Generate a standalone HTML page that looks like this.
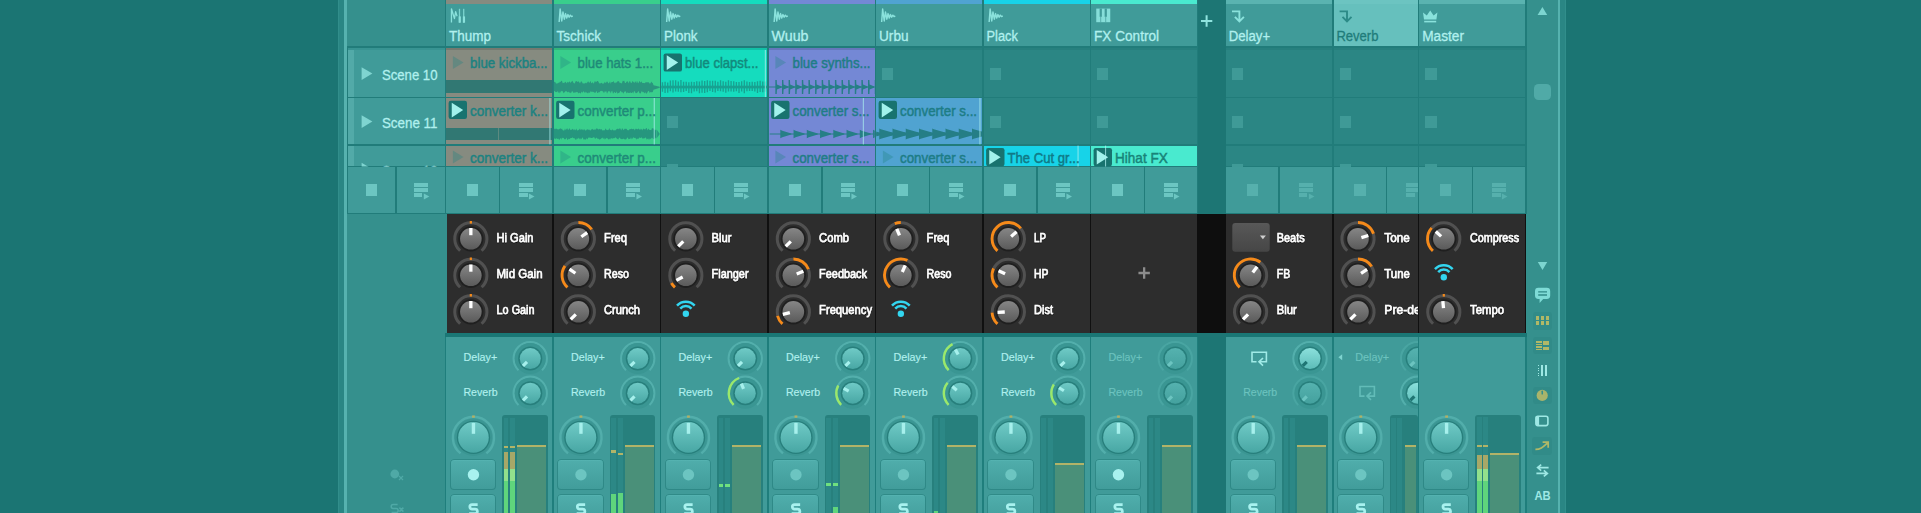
<!DOCTYPE html>
<html lang="en"><head><meta charset="utf-8"><title>Mixer</title>
<style>
html,body{margin:0;padding:0;background:#1b7573;}
body{width:1921px;height:513px;overflow:hidden;position:relative;}
#r{position:absolute;left:0;top:0;width:1921px;height:513px;overflow:hidden;}
#r>div{position:absolute;}
svg{position:absolute;left:0;top:0;}
svg text{font-family:"Liberation Sans",sans-serif;white-space:pre;}
</style></head><body>
<div id="r">
<div style="left:338.40px;top:0.00px;width:6.00px;height:513.00px;background:#2a8684;"></div>
<div style="left:338.40px;top:0.00px;width:1.10px;height:513.00px;background:#318e8b;"></div>
<div style="left:344.30px;top:0.00px;width:2.40px;height:513.00px;background:#56b2af;"></div>
<div style="left:346.70px;top:0.00px;width:1211.00px;height:513.00px;background:#35908d;"></div>
<div style="left:1557.70px;top:0.00px;width:2.60px;height:513.00px;background:#56b2af;"></div>
<div style="left:1560.30px;top:0.00px;width:5.60px;height:513.00px;background:#2a8684;"></div>
<div style="left:1564.90px;top:0.00px;width:1.10px;height:513.00px;background:#318e8b;"></div>
<div style="left:1197.30px;top:0.00px;width:28.70px;height:513.00px;background:#1d7674;"></div>
<div style="left:444.75px;top:0.00px;width:753.25px;height:213.70px;background:#217c7a;"></div>
<div style="left:1225.50px;top:0.00px;width:301.40px;height:213.70px;background:#217c7a;"></div>
<div style="left:347.20px;top:46.00px;width:99.00px;height:167.70px;background:#217c7a;"></div>
<div style="left:446.25px;top:0.00px;width:106.00px;height:3.50px;background:#868b80;"></div>
<div style="left:446.25px;top:3.50px;width:106.00px;height:42.50px;background:#409b99;"></div>
<div style="left:553.75px;top:0.00px;width:106.00px;height:3.50px;background:#39ce8c;"></div>
<div style="left:553.75px;top:3.50px;width:106.00px;height:42.50px;background:#409b99;"></div>
<div style="left:661.25px;top:0.00px;width:106.00px;height:3.50px;background:#15dcbe;"></div>
<div style="left:661.25px;top:3.50px;width:106.00px;height:42.50px;background:#409b99;"></div>
<div style="left:768.75px;top:0.00px;width:106.00px;height:3.50px;background:#7488d5;"></div>
<div style="left:768.75px;top:3.50px;width:106.00px;height:42.50px;background:#409b99;"></div>
<div style="left:876.25px;top:0.00px;width:106.00px;height:3.50px;background:#50a3d1;"></div>
<div style="left:876.25px;top:3.50px;width:106.00px;height:42.50px;background:#409b99;"></div>
<div style="left:983.75px;top:0.00px;width:106.00px;height:3.50px;background:#17d3e8;"></div>
<div style="left:983.75px;top:3.50px;width:106.00px;height:42.50px;background:#409b99;"></div>
<div style="left:1091.25px;top:0.00px;width:106.00px;height:3.50px;background:#49eacf;"></div>
<div style="left:1091.25px;top:3.50px;width:106.00px;height:42.50px;background:#409b99;"></div>
<div style="left:1226.00px;top:0.00px;width:106.25px;height:3.50px;background:#5ab3b0;"></div>
<div style="left:1226.00px;top:3.50px;width:106.25px;height:42.50px;background:#409b99;"></div>
<div style="left:1333.60px;top:0.00px;width:84.40px;height:3.50px;background:#6cc4c1;"></div>
<div style="left:1333.60px;top:3.50px;width:84.40px;height:42.50px;background:#66c0bd;"></div>
<div style="left:1419.40px;top:0.00px;width:105.80px;height:3.50px;background:#5ab3b0;"></div>
<div style="left:1419.40px;top:3.50px;width:105.80px;height:42.50px;background:#409b99;"></div>
<div style="left:347.70px;top:48.00px;width:97.60px;height:2.00px;background:#389492;"></div>
<div style="left:347.70px;top:50.00px;width:97.40px;height:47.10px;background:#409b99;"></div>
<div style="left:347.70px;top:50.00px;width:6.20px;height:47.10px;background:#52aaa8;"></div>
<div style="left:347.70px;top:98.00px;width:97.40px;height:46.40px;background:#409b99;"></div>
<div style="left:347.70px;top:98.00px;width:6.20px;height:46.40px;background:#52aaa8;"></div>
<div style="left:347.70px;top:145.60px;width:97.40px;height:20.90px;background:#409b99;"></div>
<div style="left:347.70px;top:145.60px;width:6.20px;height:20.90px;background:#52aaa8;"></div>
<div style="left:446.25px;top:47.90px;width:106.00px;height:2.10px;background:#757a70;"></div>
<div style="left:446.25px;top:50.00px;width:106.00px;height:47.10px;background:#868b80;"></div>
<div style="left:446.25px;top:98.00px;width:106.00px;height:46.40px;background:#868b80;"></div>
<div style="left:446.25px;top:145.60px;width:106.00px;height:20.90px;background:#868b80;"></div>
<div style="left:553.75px;top:47.90px;width:106.00px;height:2.10px;background:#32b57b;"></div>
<div style="left:553.75px;top:50.00px;width:106.00px;height:47.10px;background:#39ce8c;"></div>
<div style="left:553.75px;top:98.00px;width:106.00px;height:46.40px;background:#39ce8c;"></div>
<div style="left:553.75px;top:145.60px;width:106.00px;height:20.90px;background:#39ce8c;"></div>
<div style="left:661.25px;top:47.90px;width:106.00px;height:2.10px;background:#12c1a7;"></div>
<div style="left:661.25px;top:50.00px;width:106.00px;height:47.10px;background:#15dcbe;"></div>
<div style="left:661.25px;top:98.00px;width:106.00px;height:46.40px;background:#2b8684;"></div>
<div style="left:667.15px;top:116.40px;width:11.30px;height:11.30px;background:#3f9a97;"></div>
<div style="left:661.25px;top:145.60px;width:106.00px;height:20.90px;background:#2b8684;"></div>
<div style="left:667.15px;top:164.00px;width:11.30px;height:3.00px;background:#3f9a97;"></div>
<div style="left:768.75px;top:47.90px;width:106.00px;height:2.10px;background:#6677bb;"></div>
<div style="left:768.75px;top:50.00px;width:106.00px;height:47.10px;background:#7488d5;"></div>
<div style="left:768.75px;top:98.00px;width:106.00px;height:46.40px;background:#7488d5;"></div>
<div style="left:768.75px;top:145.60px;width:106.00px;height:20.90px;background:#7488d5;"></div>
<div style="left:876.25px;top:47.90px;width:106.00px;height:2.10px;background:#27807e;"></div>
<div style="left:876.25px;top:50.00px;width:106.00px;height:47.10px;background:#2b8684;"></div>
<div style="left:882.15px;top:68.40px;width:11.30px;height:11.30px;background:#3f9a97;"></div>
<div style="left:876.25px;top:98.00px;width:106.00px;height:46.40px;background:#50a3d1;"></div>
<div style="left:876.25px;top:145.60px;width:106.00px;height:20.90px;background:#50a3d1;"></div>
<div style="left:983.75px;top:47.90px;width:106.00px;height:2.10px;background:#27807e;"></div>
<div style="left:983.75px;top:50.00px;width:106.00px;height:47.10px;background:#2b8684;"></div>
<div style="left:989.65px;top:68.40px;width:11.30px;height:11.30px;background:#3f9a97;"></div>
<div style="left:983.75px;top:98.00px;width:106.00px;height:46.40px;background:#2b8684;"></div>
<div style="left:989.65px;top:116.40px;width:11.30px;height:11.30px;background:#3f9a97;"></div>
<div style="left:983.75px;top:145.60px;width:106.00px;height:20.90px;background:#17d3e8;"></div>
<div style="left:1091.25px;top:47.90px;width:106.00px;height:2.10px;background:#27807e;"></div>
<div style="left:1091.25px;top:50.00px;width:106.00px;height:47.10px;background:#2b8684;"></div>
<div style="left:1097.15px;top:68.40px;width:11.30px;height:11.30px;background:#3f9a97;"></div>
<div style="left:1091.25px;top:98.00px;width:106.00px;height:46.40px;background:#2b8684;"></div>
<div style="left:1097.15px;top:116.40px;width:11.30px;height:11.30px;background:#3f9a97;"></div>
<div style="left:1091.25px;top:145.60px;width:106.00px;height:20.90px;background:#49eacf;"></div>
<div style="left:1226.00px;top:47.90px;width:106.25px;height:2.10px;background:#27807e;"></div>
<div style="left:1226.00px;top:50.00px;width:106.25px;height:47.10px;background:#2b8684;"></div>
<div style="left:1231.90px;top:68.40px;width:11.30px;height:11.30px;background:#3f9a97;"></div>
<div style="left:1226.00px;top:98.00px;width:106.25px;height:46.40px;background:#2b8684;"></div>
<div style="left:1231.90px;top:116.40px;width:11.30px;height:11.30px;background:#3f9a97;"></div>
<div style="left:1226.00px;top:145.60px;width:106.25px;height:20.90px;background:#2b8684;"></div>
<div style="left:1231.90px;top:164.00px;width:11.30px;height:3.00px;background:#3f9a97;"></div>
<div style="left:1333.60px;top:47.90px;width:84.40px;height:2.10px;background:#27807e;"></div>
<div style="left:1333.60px;top:50.00px;width:84.40px;height:47.10px;background:#2b8684;"></div>
<div style="left:1339.50px;top:68.40px;width:11.30px;height:11.30px;background:#3f9a97;"></div>
<div style="left:1333.60px;top:98.00px;width:84.40px;height:46.40px;background:#2b8684;"></div>
<div style="left:1339.50px;top:116.40px;width:11.30px;height:11.30px;background:#3f9a97;"></div>
<div style="left:1333.60px;top:145.60px;width:84.40px;height:20.90px;background:#2b8684;"></div>
<div style="left:1339.50px;top:164.00px;width:11.30px;height:3.00px;background:#3f9a97;"></div>
<div style="left:1419.40px;top:47.90px;width:105.80px;height:2.10px;background:#27807e;"></div>
<div style="left:1419.40px;top:50.00px;width:105.80px;height:47.10px;background:#2b8684;"></div>
<div style="left:1425.30px;top:68.40px;width:11.30px;height:11.30px;background:#3f9a97;"></div>
<div style="left:1419.40px;top:98.00px;width:105.80px;height:46.40px;background:#2b8684;"></div>
<div style="left:1425.30px;top:116.40px;width:11.30px;height:11.30px;background:#3f9a97;"></div>
<div style="left:1419.40px;top:145.60px;width:105.80px;height:20.90px;background:#2b8684;"></div>
<div style="left:1425.30px;top:164.00px;width:11.30px;height:3.00px;background:#3f9a97;"></div>
<div style="left:446.25px;top:80.00px;width:106.00px;height:13.20px;background:#317873;"></div>
<div style="left:446.25px;top:127.75px;width:106.00px;height:12.30px;background:#317873;"></div>
<div style="left:498.30px;top:127.75px;width:1.00px;height:12.30px;background:#5c8a80;"></div>
<div style="left:347.20px;top:166.00px;width:99.00px;height:47.70px;background:#217c7a;"></div>
<div style="left:347.75px;top:167.00px;width:47.30px;height:45.50px;background:#409b99;"></div>
<div style="left:396.90px;top:167.00px;width:48.20px;height:45.50px;background:#409b99;"></div>
<div style="left:365.90px;top:184.40px;width:11.30px;height:11.30px;background:#6cc6c2;"></div>
<div style="left:413.80px;top:183.10px;width:14.00px;height:3.50px;background:#6cc6c2;"></div>
<div style="left:413.80px;top:187.80px;width:14.00px;height:3.90px;background:#6cc6c2;"></div>
<div style="left:413.80px;top:193.10px;width:8.60px;height:3.90px;background:#6cc6c2;"></div>
<div style="left:446.25px;top:167.00px;width:52.25px;height:45.50px;background:#409b99;"></div>
<div style="left:500.00px;top:167.00px;width:52.25px;height:45.50px;background:#409b99;"></div>
<div style="left:466.88px;top:184.40px;width:11.30px;height:11.30px;background:#6cc6c2;"></div>
<div style="left:518.92px;top:183.10px;width:14.00px;height:3.50px;background:#6cc6c2;"></div>
<div style="left:518.92px;top:187.80px;width:14.00px;height:3.90px;background:#6cc6c2;"></div>
<div style="left:518.92px;top:193.10px;width:8.60px;height:3.90px;background:#6cc6c2;"></div>
<div style="left:553.75px;top:167.00px;width:52.25px;height:45.50px;background:#409b99;"></div>
<div style="left:607.50px;top:167.00px;width:52.25px;height:45.50px;background:#409b99;"></div>
<div style="left:574.38px;top:184.40px;width:11.30px;height:11.30px;background:#6cc6c2;"></div>
<div style="left:626.42px;top:183.10px;width:14.00px;height:3.50px;background:#6cc6c2;"></div>
<div style="left:626.42px;top:187.80px;width:14.00px;height:3.90px;background:#6cc6c2;"></div>
<div style="left:626.42px;top:193.10px;width:8.60px;height:3.90px;background:#6cc6c2;"></div>
<div style="left:661.25px;top:167.00px;width:52.25px;height:45.50px;background:#409b99;"></div>
<div style="left:715.00px;top:167.00px;width:52.25px;height:45.50px;background:#409b99;"></div>
<div style="left:681.88px;top:184.40px;width:11.30px;height:11.30px;background:#6cc6c2;"></div>
<div style="left:733.92px;top:183.10px;width:14.00px;height:3.50px;background:#6cc6c2;"></div>
<div style="left:733.92px;top:187.80px;width:14.00px;height:3.90px;background:#6cc6c2;"></div>
<div style="left:733.92px;top:193.10px;width:8.60px;height:3.90px;background:#6cc6c2;"></div>
<div style="left:768.75px;top:167.00px;width:52.25px;height:45.50px;background:#409b99;"></div>
<div style="left:822.50px;top:167.00px;width:52.25px;height:45.50px;background:#409b99;"></div>
<div style="left:789.38px;top:184.40px;width:11.30px;height:11.30px;background:#6cc6c2;"></div>
<div style="left:841.42px;top:183.10px;width:14.00px;height:3.50px;background:#6cc6c2;"></div>
<div style="left:841.42px;top:187.80px;width:14.00px;height:3.90px;background:#6cc6c2;"></div>
<div style="left:841.42px;top:193.10px;width:8.60px;height:3.90px;background:#6cc6c2;"></div>
<div style="left:876.25px;top:167.00px;width:52.25px;height:45.50px;background:#409b99;"></div>
<div style="left:930.00px;top:167.00px;width:52.25px;height:45.50px;background:#409b99;"></div>
<div style="left:896.88px;top:184.40px;width:11.30px;height:11.30px;background:#6cc6c2;"></div>
<div style="left:948.92px;top:183.10px;width:14.00px;height:3.50px;background:#6cc6c2;"></div>
<div style="left:948.92px;top:187.80px;width:14.00px;height:3.90px;background:#6cc6c2;"></div>
<div style="left:948.92px;top:193.10px;width:8.60px;height:3.90px;background:#6cc6c2;"></div>
<div style="left:983.75px;top:167.00px;width:52.25px;height:45.50px;background:#409b99;"></div>
<div style="left:1037.50px;top:167.00px;width:52.25px;height:45.50px;background:#409b99;"></div>
<div style="left:1004.38px;top:184.40px;width:11.30px;height:11.30px;background:#6cc6c2;"></div>
<div style="left:1056.42px;top:183.10px;width:14.00px;height:3.50px;background:#6cc6c2;"></div>
<div style="left:1056.42px;top:187.80px;width:14.00px;height:3.90px;background:#6cc6c2;"></div>
<div style="left:1056.42px;top:193.10px;width:8.60px;height:3.90px;background:#6cc6c2;"></div>
<div style="left:1091.25px;top:167.00px;width:52.25px;height:45.50px;background:#409b99;"></div>
<div style="left:1145.00px;top:167.00px;width:52.25px;height:45.50px;background:#409b99;"></div>
<div style="left:1111.88px;top:184.40px;width:11.30px;height:11.30px;background:#6cc6c2;"></div>
<div style="left:1163.92px;top:183.10px;width:14.00px;height:3.50px;background:#6cc6c2;"></div>
<div style="left:1163.92px;top:187.80px;width:14.00px;height:3.90px;background:#6cc6c2;"></div>
<div style="left:1163.92px;top:193.10px;width:8.60px;height:3.90px;background:#6cc6c2;"></div>
<div style="left:1226.00px;top:167.00px;width:52.38px;height:45.50px;background:#409b99;"></div>
<div style="left:1279.88px;top:167.00px;width:52.38px;height:45.50px;background:#409b99;"></div>
<div style="left:1246.69px;top:184.40px;width:11.30px;height:11.30px;background:#56b0ad;"></div>
<div style="left:1298.86px;top:183.10px;width:14.00px;height:3.50px;background:#56b0ad;"></div>
<div style="left:1298.86px;top:187.80px;width:14.00px;height:3.90px;background:#56b0ad;"></div>
<div style="left:1298.86px;top:193.10px;width:8.60px;height:3.90px;background:#56b0ad;"></div>
<div style="left:1333.60px;top:167.00px;width:52.38px;height:45.50px;background:#409b99;"></div>
<div style="left:1387.47px;top:167.00px;width:30.53px;height:45.50px;background:#409b99;"></div>
<div style="left:1354.29px;top:184.40px;width:11.30px;height:11.30px;background:#56b0ad;"></div>
<div style="left:1406.46px;top:183.10px;width:11.54px;height:3.50px;background:#56b0ad;"></div>
<div style="left:1406.46px;top:187.80px;width:11.54px;height:3.90px;background:#56b0ad;"></div>
<div style="left:1406.46px;top:193.10px;width:8.60px;height:3.90px;background:#56b0ad;"></div>
<div style="left:1419.40px;top:167.00px;width:52.15px;height:45.50px;background:#409b99;"></div>
<div style="left:1473.05px;top:167.00px;width:52.15px;height:45.50px;background:#409b99;"></div>
<div style="left:1439.98px;top:184.40px;width:11.30px;height:11.30px;background:#56b0ad;"></div>
<div style="left:1491.92px;top:183.10px;width:14.00px;height:3.50px;background:#56b0ad;"></div>
<div style="left:1491.92px;top:187.80px;width:14.00px;height:3.90px;background:#56b0ad;"></div>
<div style="left:1491.92px;top:193.10px;width:8.60px;height:3.90px;background:#56b0ad;"></div>
<div style="left:446.90px;top:213.70px;width:1078.70px;height:119.00px;background:#101010;"></div>
<div style="left:446.85px;top:213.70px;width:105.30px;height:119.00px;background:#2d2d2d;"></div>
<div style="left:553.75px;top:213.70px;width:105.90px;height:119.00px;background:#2d2d2d;"></div>
<div style="left:661.25px;top:213.70px;width:105.90px;height:119.00px;background:#2d2d2d;"></div>
<div style="left:768.75px;top:213.70px;width:105.90px;height:119.00px;background:#2d2d2d;"></div>
<div style="left:876.25px;top:213.70px;width:105.90px;height:119.00px;background:#2d2d2d;"></div>
<div style="left:983.75px;top:213.70px;width:105.90px;height:119.00px;background:#2d2d2d;"></div>
<div style="left:1091.25px;top:213.70px;width:105.90px;height:119.00px;background:#2d2d2d;"></div>
<div style="left:1226.00px;top:213.70px;width:106.25px;height:119.00px;background:#2d2d2d;"></div>
<div style="left:1333.60px;top:213.70px;width:84.40px;height:119.00px;background:#2d2d2d;"></div>
<div style="left:1419.40px;top:213.70px;width:105.80px;height:119.00px;background:#2d2d2d;"></div>
<div style="left:1197.30px;top:213.70px;width:28.70px;height:119.00px;background:#0e0e0e;"></div>
<div style="left:444.75px;top:332.70px;width:753.25px;height:181.00px;background:#1f7e7c;"></div>
<div style="left:1225.50px;top:332.70px;width:301.40px;height:181.00px;background:#1f7e7c;"></div>
<div style="left:444.75px;top:332.60px;width:753.25px;height:4.00px;background:#1a7775;"></div>
<div style="left:1225.50px;top:332.60px;width:301.40px;height:4.00px;background:#1a7775;"></div>
<div style="left:446.25px;top:336.60px;width:106.00px;height:180.00px;background:#409b99;"></div>
<div style="left:449.95px;top:459.40px;width:46.4px;height:30.400000000000002px;border-radius:4px;background:linear-gradient(#50aeac,#419c9a);box-shadow:inset 0 0 0 1px rgba(44,134,132,.9),inset 0 2px 0 0 rgba(95,190,186,.35);"></div>
<div style="left:449.95px;top:494.20px;width:46.4px;height:30.400000000000002px;border-radius:4px;background:linear-gradient(#50aeac,#419c9a);box-shadow:inset 0 0 0 1px rgba(44,134,132,.9),inset 0 2px 0 0 rgba(95,190,186,.35);"></div>
<div style="left:502.25px;top:415.00px;width:45.50px;height:110.00px;background:#27807d;border-radius:3px;"></div>
<div style="left:503.85px;top:417.50px;width:4.50px;height:110.00px;background:#2c8886;"></div>
<div style="left:510.05px;top:417.50px;width:5.00px;height:110.00px;background:#2c8886;"></div>
<div style="left:517.25px;top:445.00px;width:28.80px;height:2.00px;background:#b2b368;"></div>
<div style="left:517.25px;top:447.00px;width:28.80px;height:80.00px;background:#4a9079;"></div>
<div style="left:503.85px;top:445.80px;width:4.50px;height:2.50px;background:#b2b468;"></div>
<div style="left:503.85px;top:452.00px;width:4.50px;height:16.90px;background:#a7a868;"></div>
<div style="left:503.85px;top:468.90px;width:4.50px;height:11.90px;background:#92e08c;"></div>
<div style="left:503.85px;top:480.80px;width:4.50px;height:39.20px;background:#5fd57c;"></div>
<div style="left:510.05px;top:445.80px;width:5.00px;height:2.50px;background:#b2b468;"></div>
<div style="left:510.05px;top:452.00px;width:5.00px;height:16.90px;background:#a7a868;"></div>
<div style="left:510.05px;top:468.90px;width:5.00px;height:11.90px;background:#92e08c;"></div>
<div style="left:510.05px;top:480.80px;width:5.00px;height:39.20px;background:#5fd57c;"></div>
<div style="left:553.75px;top:336.60px;width:106.00px;height:180.00px;background:#409b99;"></div>
<div style="left:557.45px;top:459.40px;width:46.4px;height:30.400000000000002px;border-radius:4px;background:linear-gradient(#50aeac,#419c9a);box-shadow:inset 0 0 0 1px rgba(44,134,132,.9),inset 0 2px 0 0 rgba(95,190,186,.35);"></div>
<div style="left:557.45px;top:494.20px;width:46.4px;height:30.400000000000002px;border-radius:4px;background:linear-gradient(#50aeac,#419c9a);box-shadow:inset 0 0 0 1px rgba(44,134,132,.9),inset 0 2px 0 0 rgba(95,190,186,.35);"></div>
<div style="left:609.75px;top:415.00px;width:45.50px;height:110.00px;background:#27807d;border-radius:3px;"></div>
<div style="left:611.35px;top:417.50px;width:4.50px;height:110.00px;background:#2c8886;"></div>
<div style="left:617.55px;top:417.50px;width:5.00px;height:110.00px;background:#2c8886;"></div>
<div style="left:624.75px;top:445.00px;width:28.80px;height:2.00px;background:#b2b368;"></div>
<div style="left:624.75px;top:447.00px;width:28.80px;height:80.00px;background:#4a9079;"></div>
<div style="left:611.35px;top:450.30px;width:4.50px;height:2.50px;background:#b2b468;"></div>
<div style="left:611.35px;top:493.80px;width:4.50px;height:26.20px;background:#5fd57c;"></div>
<div style="left:617.55px;top:452.90px;width:5.00px;height:2.50px;background:#b2b468;"></div>
<div style="left:617.55px;top:492.60px;width:5.00px;height:27.40px;background:#5fd57c;"></div>
<div style="left:661.25px;top:336.60px;width:106.00px;height:180.00px;background:#409b99;"></div>
<div style="left:664.95px;top:459.40px;width:46.4px;height:30.400000000000002px;border-radius:4px;background:linear-gradient(#50aeac,#419c9a);box-shadow:inset 0 0 0 1px rgba(44,134,132,.9),inset 0 2px 0 0 rgba(95,190,186,.35);"></div>
<div style="left:664.95px;top:494.20px;width:46.4px;height:30.400000000000002px;border-radius:4px;background:linear-gradient(#50aeac,#419c9a);box-shadow:inset 0 0 0 1px rgba(44,134,132,.9),inset 0 2px 0 0 rgba(95,190,186,.35);"></div>
<div style="left:717.25px;top:415.00px;width:45.50px;height:110.00px;background:#27807d;border-radius:3px;"></div>
<div style="left:718.85px;top:417.50px;width:4.50px;height:110.00px;background:#2c8886;"></div>
<div style="left:725.05px;top:417.50px;width:5.00px;height:110.00px;background:#2c8886;"></div>
<div style="left:732.25px;top:445.00px;width:28.80px;height:2.00px;background:#b2b368;"></div>
<div style="left:732.25px;top:447.00px;width:28.80px;height:80.00px;background:#4a9079;"></div>
<div style="left:718.85px;top:484.00px;width:4.50px;height:2.50px;background:#6fe07f;"></div>
<div style="left:725.05px;top:484.00px;width:5.00px;height:2.50px;background:#6fe07f;"></div>
<div style="left:768.75px;top:336.60px;width:106.00px;height:180.00px;background:#409b99;"></div>
<div style="left:772.45px;top:459.40px;width:46.4px;height:30.400000000000002px;border-radius:4px;background:linear-gradient(#50aeac,#419c9a);box-shadow:inset 0 0 0 1px rgba(44,134,132,.9),inset 0 2px 0 0 rgba(95,190,186,.35);"></div>
<div style="left:772.45px;top:494.20px;width:46.4px;height:30.400000000000002px;border-radius:4px;background:linear-gradient(#50aeac,#419c9a);box-shadow:inset 0 0 0 1px rgba(44,134,132,.9),inset 0 2px 0 0 rgba(95,190,186,.35);"></div>
<div style="left:824.75px;top:415.00px;width:45.50px;height:110.00px;background:#27807d;border-radius:3px;"></div>
<div style="left:826.35px;top:417.50px;width:4.50px;height:110.00px;background:#2c8886;"></div>
<div style="left:832.55px;top:417.50px;width:5.00px;height:110.00px;background:#2c8886;"></div>
<div style="left:839.75px;top:445.00px;width:28.80px;height:2.00px;background:#b2b368;"></div>
<div style="left:839.75px;top:447.00px;width:28.80px;height:80.00px;background:#4a9079;"></div>
<div style="left:826.35px;top:483.40px;width:4.50px;height:2.50px;background:#6fe07f;"></div>
<div style="left:832.55px;top:483.40px;width:5.00px;height:2.50px;background:#6fe07f;"></div>
<div style="left:832.55px;top:506.50px;width:5.00px;height:13.50px;background:#5fd57c;"></div>
<div style="left:876.25px;top:336.60px;width:106.00px;height:180.00px;background:#409b99;"></div>
<div style="left:879.95px;top:459.40px;width:46.4px;height:30.400000000000002px;border-radius:4px;background:linear-gradient(#50aeac,#419c9a);box-shadow:inset 0 0 0 1px rgba(44,134,132,.9),inset 0 2px 0 0 rgba(95,190,186,.35);"></div>
<div style="left:879.95px;top:494.20px;width:46.4px;height:30.400000000000002px;border-radius:4px;background:linear-gradient(#50aeac,#419c9a);box-shadow:inset 0 0 0 1px rgba(44,134,132,.9),inset 0 2px 0 0 rgba(95,190,186,.35);"></div>
<div style="left:932.25px;top:415.00px;width:45.50px;height:110.00px;background:#27807d;border-radius:3px;"></div>
<div style="left:933.85px;top:417.50px;width:4.50px;height:110.00px;background:#2c8886;"></div>
<div style="left:940.05px;top:417.50px;width:5.00px;height:110.00px;background:#2c8886;"></div>
<div style="left:947.25px;top:445.00px;width:28.80px;height:2.00px;background:#b2b368;"></div>
<div style="left:947.25px;top:447.00px;width:28.80px;height:80.00px;background:#4a9079;"></div>
<div style="left:933.85px;top:511.00px;width:4.50px;height:9.00px;background:#5fd57c;"></div>
<div style="left:983.75px;top:336.60px;width:106.00px;height:180.00px;background:#409b99;"></div>
<div style="left:987.45px;top:459.40px;width:46.4px;height:30.400000000000002px;border-radius:4px;background:linear-gradient(#50aeac,#419c9a);box-shadow:inset 0 0 0 1px rgba(44,134,132,.9),inset 0 2px 0 0 rgba(95,190,186,.35);"></div>
<div style="left:987.45px;top:494.20px;width:46.4px;height:30.400000000000002px;border-radius:4px;background:linear-gradient(#50aeac,#419c9a);box-shadow:inset 0 0 0 1px rgba(44,134,132,.9),inset 0 2px 0 0 rgba(95,190,186,.35);"></div>
<div style="left:1039.75px;top:415.00px;width:45.50px;height:110.00px;background:#27807d;border-radius:3px;"></div>
<div style="left:1041.35px;top:417.50px;width:4.50px;height:110.00px;background:#2c8886;"></div>
<div style="left:1047.55px;top:417.50px;width:5.00px;height:110.00px;background:#2c8886;"></div>
<div style="left:1054.75px;top:463.00px;width:28.80px;height:2.00px;background:#b2b368;"></div>
<div style="left:1054.75px;top:465.00px;width:28.80px;height:80.00px;background:#4a9079;"></div>
<div style="left:1091.25px;top:336.60px;width:106.00px;height:180.00px;background:#409b99;"></div>
<div style="left:1094.95px;top:459.40px;width:46.4px;height:30.400000000000002px;border-radius:4px;background:linear-gradient(#50aeac,#419c9a);box-shadow:inset 0 0 0 1px rgba(44,134,132,.9),inset 0 2px 0 0 rgba(95,190,186,.35);"></div>
<div style="left:1094.95px;top:494.20px;width:46.4px;height:30.400000000000002px;border-radius:4px;background:linear-gradient(#50aeac,#419c9a);box-shadow:inset 0 0 0 1px rgba(44,134,132,.9),inset 0 2px 0 0 rgba(95,190,186,.35);"></div>
<div style="left:1147.25px;top:415.00px;width:45.50px;height:110.00px;background:#27807d;border-radius:3px;"></div>
<div style="left:1148.85px;top:417.50px;width:4.50px;height:110.00px;background:#2c8886;"></div>
<div style="left:1155.05px;top:417.50px;width:5.00px;height:110.00px;background:#2c8886;"></div>
<div style="left:1162.25px;top:445.00px;width:28.80px;height:2.00px;background:#b2b368;"></div>
<div style="left:1162.25px;top:447.00px;width:28.80px;height:80.00px;background:#4a9079;"></div>
<div style="left:1226.00px;top:336.60px;width:106.25px;height:180.00px;background:#409b99;"></div>
<div style="left:1229.70px;top:459.40px;width:46.4px;height:30.400000000000002px;border-radius:4px;background:linear-gradient(#50aeac,#419c9a);box-shadow:inset 0 0 0 1px rgba(44,134,132,.9),inset 0 2px 0 0 rgba(95,190,186,.35);"></div>
<div style="left:1229.70px;top:494.20px;width:46.4px;height:30.400000000000002px;border-radius:4px;background:linear-gradient(#50aeac,#419c9a);box-shadow:inset 0 0 0 1px rgba(44,134,132,.9),inset 0 2px 0 0 rgba(95,190,186,.35);"></div>
<div style="left:1282.00px;top:415.00px;width:45.50px;height:110.00px;background:#27807d;border-radius:3px;"></div>
<div style="left:1283.60px;top:417.50px;width:4.50px;height:110.00px;background:#2c8886;"></div>
<div style="left:1289.80px;top:417.50px;width:5.00px;height:110.00px;background:#2c8886;"></div>
<div style="left:1297.00px;top:445.00px;width:28.80px;height:2.00px;background:#b2b368;"></div>
<div style="left:1297.00px;top:447.00px;width:28.80px;height:80.00px;background:#4a9079;"></div>
<div style="left:1333.60px;top:336.60px;width:84.40px;height:180.00px;background:#409b99;"></div>
<div style="left:1337.30px;top:459.40px;width:46.4px;height:30.400000000000002px;border-radius:4px;background:linear-gradient(#50aeac,#419c9a);box-shadow:inset 0 0 0 1px rgba(44,134,132,.9),inset 0 2px 0 0 rgba(95,190,186,.35);"></div>
<div style="left:1337.30px;top:494.20px;width:46.4px;height:30.400000000000002px;border-radius:4px;background:linear-gradient(#50aeac,#419c9a);box-shadow:inset 0 0 0 1px rgba(44,134,132,.9),inset 0 2px 0 0 rgba(95,190,186,.35);"></div>
<div style="left:1389.60px;top:415.00px;width:28.40px;height:110.00px;background:#27807d;border-radius:3px;"></div>
<div style="left:1391.20px;top:417.50px;width:4.50px;height:110.00px;background:#2c8886;"></div>
<div style="left:1397.40px;top:417.50px;width:5.00px;height:110.00px;background:#2c8886;"></div>
<div style="left:1404.60px;top:445.00px;width:11.70px;height:2.00px;background:#b2b368;"></div>
<div style="left:1404.60px;top:447.00px;width:11.70px;height:80.00px;background:#4a9079;"></div>
<div style="left:1419.40px;top:336.60px;width:105.80px;height:180.00px;background:#409b99;"></div>
<div style="left:1423.10px;top:459.40px;width:46.4px;height:30.400000000000002px;border-radius:4px;background:linear-gradient(#50aeac,#419c9a);box-shadow:inset 0 0 0 1px rgba(44,134,132,.9),inset 0 2px 0 0 rgba(95,190,186,.35);"></div>
<div style="left:1423.10px;top:494.20px;width:46.4px;height:30.400000000000002px;border-radius:4px;background:linear-gradient(#50aeac,#419c9a);box-shadow:inset 0 0 0 1px rgba(44,134,132,.9),inset 0 2px 0 0 rgba(95,190,186,.35);"></div>
<div style="left:1475.40px;top:414.50px;width:45.50px;height:110.00px;background:#27807d;border-radius:3px;"></div>
<div style="left:1477.00px;top:417.00px;width:4.50px;height:110.00px;background:#2c8886;"></div>
<div style="left:1483.20px;top:417.00px;width:5.00px;height:110.00px;background:#2c8886;"></div>
<div style="left:1490.40px;top:453.20px;width:28.80px;height:2.00px;background:#b2b368;"></div>
<div style="left:1490.40px;top:455.20px;width:28.80px;height:80.00px;background:#4a9079;"></div>
<div style="left:1477.00px;top:444.60px;width:4.50px;height:2.50px;background:#b2b468;"></div>
<div style="left:1477.00px;top:455.00px;width:4.50px;height:13.90px;background:#a7a868;"></div>
<div style="left:1477.00px;top:468.90px;width:4.50px;height:11.90px;background:#92e08c;"></div>
<div style="left:1477.00px;top:480.80px;width:4.50px;height:39.20px;background:#5fd57c;"></div>
<div style="left:1483.20px;top:444.60px;width:5.00px;height:2.50px;background:#b2b468;"></div>
<div style="left:1483.20px;top:455.00px;width:5.00px;height:13.90px;background:#a7a868;"></div>
<div style="left:1483.20px;top:468.90px;width:5.00px;height:11.90px;background:#92e08c;"></div>
<div style="left:1483.20px;top:480.80px;width:5.00px;height:39.20px;background:#5fd57c;"></div>
<div style="left:1526.90px;top:0.00px;width:30.70px;height:513.00px;background:#35908d;"></div>
<div style="left:1534.00px;top:83.80px;width:16.60px;height:16.40px;background:#50aaa7;border-radius:4.5px;"></div>
<div style="left:1533.00px;top:312.20px;width:19.00px;height:17.40px;background:#318b88;border-radius:3px;"></div>
<div style="left:1535.50px;top:316.20px;width:3.70px;height:3.70px;background:#b0b867;"></div>
<div style="left:1535.50px;top:321.20px;width:3.70px;height:3.70px;background:#b0b867;"></div>
<div style="left:1540.50px;top:316.20px;width:3.70px;height:3.70px;background:#b0b867;"></div>
<div style="left:1540.50px;top:321.20px;width:3.70px;height:3.70px;background:#b0b867;"></div>
<div style="left:1545.50px;top:316.20px;width:3.70px;height:3.70px;background:#b0b867;"></div>
<div style="left:1545.50px;top:321.20px;width:3.70px;height:3.70px;background:#b0b867;"></div>
<div style="left:1533.00px;top:337.00px;width:19.00px;height:17.40px;background:#318b88;border-radius:3px;"></div>
<div style="left:1535.50px;top:341.40px;width:6.00px;height:1.20px;background:#b0b867;"></div>
<div style="left:1535.50px;top:343.90px;width:6.00px;height:1.20px;background:#b0b867;"></div>
<div style="left:1535.50px;top:346.40px;width:6.00px;height:1.20px;background:#b0b867;"></div>
<div style="left:1535.50px;top:348.90px;width:6.00px;height:1.20px;background:#b0b867;"></div>
<div style="left:1543.00px;top:341.40px;width:6.20px;height:3.60px;background:#b0b867;"></div>
<div style="left:1543.00px;top:346.60px;width:6.20px;height:3.60px;background:#b0b867;"></div>
<div style="left:1541.20px;top:364.80px;width:2.30px;height:11.60px;background:#9ee8e4;"></div>
<div style="left:1544.70px;top:364.80px;width:2.30px;height:11.60px;background:#9ee8e4;"></div>
<div style="left:1537.80px;top:365.00px;width:1.00px;height:1.00px;background:#9ee8e4;"></div>
<div style="left:1537.80px;top:367.50px;width:1.00px;height:1.00px;background:#9ee8e4;"></div>
<div style="left:1537.80px;top:370.00px;width:1.00px;height:1.00px;background:#9ee8e4;"></div>
<div style="left:1537.80px;top:372.50px;width:1.00px;height:1.00px;background:#9ee8e4;"></div>
<div style="left:1537.80px;top:375.00px;width:1.00px;height:1.00px;background:#9ee8e4;"></div>
<div style="left:1533.00px;top:386.60px;width:19.00px;height:17.40px;background:#318b88;border-radius:3px;"></div>
<div style="left:1532.40px;top:436.60px;width:19.40px;height:18.00px;background:#318b88;border-radius:3px;"></div>
<svg width="1921" height="513" viewBox="0 0 1921 513"><defs>
<linearGradient id="kg" x1="0" y1="0" x2="0" y2="1"><stop offset="0" stop-color="#868686"/><stop offset="1" stop-color="#5a5a5a"/></linearGradient>
<linearGradient id="bg" x1="0" y1="0" x2="0" y2="1"><stop offset="0" stop-color="#585858"/><stop offset="1" stop-color="#464646"/></linearGradient>
<linearGradient id="sg" x1="0" y1="0" x2="0" y2="1"><stop offset="0" stop-color="#6fcac6"/><stop offset="1" stop-color="#48a7a4"/></linearGradient>
<linearGradient id="sgd" x1="0" y1="0" x2="0" y2="1"><stop offset="0" stop-color="#55b2af"/><stop offset="1" stop-color="#44a19e"/></linearGradient>
<linearGradient id="sgh" x1="0" y1="0" x2="0" y2="1"><stop offset="0" stop-color="#8be0dc"/><stop offset="1" stop-color="#5cbcb8"/></linearGradient>
<filter id="ts" x="-10%" y="-40%" width="120%" height="190%"><feDropShadow dx="0" dy="1" stdDeviation="0.35" flood-color="#000" flood-opacity="0.8"/></filter>
<clipPath id="cliprows"><rect x="340" y="47" width="1200" height="119.6"/></clipPath>
</defs>
<path d="M553.75 82.73 L554.50 81.75 L555.25 82.09 L556.00 83.53 L556.75 83.59 L557.50 83.49 L558.25 82.43 L559.00 83.33 L559.75 81.82 L560.50 81.97 L561.25 80.77 L562.00 81.12 L562.75 83.27 L563.50 82.77 L564.25 83.16 L565.00 81.78 L565.75 82.06 L566.50 83.52 L567.25 81.66 L568.00 82.76 L568.75 82.34 L569.50 81.32 L570.25 82.97 L571.00 82.12 L571.75 81.51 L572.50 80.76 L573.25 82.45 L574.00 83.24 L574.75 83.58 L575.50 81.41 L576.25 81.07 L577.00 81.61 L577.75 81.96 L578.50 81.18 L579.25 82.28 L580.00 83.52 L580.75 81.76 L581.50 81.23 L582.25 82.54 L583.00 83.63 L583.75 83.20 L584.50 83.52 L585.25 83.31 L586.00 82.53 L586.75 83.46 L587.50 82.05 L588.25 81.24 L589.00 82.86 L589.75 82.62 L590.50 80.83 L591.25 83.17 L592.00 83.00 L592.75 81.93 L593.50 83.69 L594.25 82.59 L595.00 80.84 L595.75 82.15 L596.50 81.67 L597.25 81.00 L598.00 81.08 L598.75 82.52 L599.50 83.39 L600.25 83.51 L601.00 83.07 L601.75 82.68 L602.50 83.70 L603.25 83.40 L604.00 83.62 L604.75 81.86 L605.50 82.94 L606.25 82.61 L607.00 81.15 L607.75 82.30 L608.50 83.44 L609.25 82.67 L610.00 81.21 L610.75 83.63 L611.50 82.12 L612.25 82.07 L613.00 82.12 L613.75 81.11 L614.50 82.92 L615.25 83.20 L616.00 82.10 L616.75 82.71 L617.50 81.27 L618.25 81.14 L619.00 81.25 L619.75 83.02 L620.50 82.63 L621.25 83.62 L622.00 82.92 L622.75 80.83 L623.50 80.89 L624.25 80.83 L625.00 83.04 L625.75 83.11 L626.50 81.83 L627.25 81.18 L628.00 81.74 L628.75 83.45 L629.50 80.97 L630.25 81.45 L631.00 83.16 L631.75 82.70 L632.50 80.79 L633.25 82.50 L634.00 81.53 L634.75 83.32 L635.50 80.99 L636.25 83.26 L637.00 80.76 L637.75 82.65 L638.50 83.31 L639.25 80.79 L640.00 82.12 L640.75 82.40 L641.50 81.22 L642.25 82.94 L643.00 82.98 L643.75 82.92 L644.50 83.31 L645.25 82.64 L646.00 81.95 L646.75 82.44 L647.50 82.20 L648.25 82.13 L649.00 82.38 L649.75 83.69 L650.50 83.18 L651.25 81.52 L652.00 82.72 L652.75 83.07 L653.50 85.29 L659.75 86.70 L659.75 87.70 L653.50 89.79 L652.75 91.88 L652.00 92.26 L651.25 92.37 L650.50 92.12 L649.75 93.10 L649.00 91.25 L648.25 90.76 L647.50 92.30 L646.75 93.45 L646.00 93.41 L645.25 92.07 L644.50 93.43 L643.75 91.96 L643.00 92.46 L642.25 91.58 L641.50 91.33 L640.75 93.32 L640.00 93.50 L639.25 92.65 L638.50 90.74 L637.75 92.35 L637.00 92.67 L636.25 93.18 L635.50 93.12 L634.75 91.15 L634.00 91.21 L633.25 93.54 L632.50 91.89 L631.75 93.10 L631.00 93.07 L630.25 92.13 L629.50 93.05 L628.75 92.68 L628.00 93.10 L627.25 92.14 L626.50 93.40 L625.75 91.31 L625.00 91.38 L624.25 91.79 L623.50 93.66 L622.75 92.04 L622.00 92.78 L621.25 91.54 L620.50 90.79 L619.75 92.25 L619.00 92.92 L618.25 93.12 L617.50 93.65 L616.75 91.37 L616.00 93.04 L615.25 93.02 L614.50 91.80 L613.75 92.79 L613.00 93.64 L612.25 90.78 L611.50 91.14 L610.75 93.55 L610.00 91.18 L609.25 91.49 L608.50 91.01 L607.75 92.15 L607.00 93.68 L606.25 91.07 L605.50 91.74 L604.75 91.15 L604.00 93.32 L603.25 91.79 L602.50 91.15 L601.75 90.86 L601.00 91.19 L600.25 90.90 L599.50 92.60 L598.75 91.90 L598.00 93.09 L597.25 93.04 L596.50 90.86 L595.75 92.55 L595.00 92.77 L594.25 92.40 L593.50 91.96 L592.75 91.49 L592.00 92.15 L591.25 91.40 L590.50 91.15 L589.75 93.35 L589.00 91.95 L588.25 93.29 L587.50 93.35 L586.75 92.05 L586.00 93.31 L585.25 91.44 L584.50 93.00 L583.75 91.05 L583.00 92.09 L582.25 92.71 L581.50 91.55 L580.75 93.68 L580.00 92.80 L579.25 92.69 L578.50 93.53 L577.75 92.07 L577.00 92.48 L576.25 91.64 L575.50 92.42 L574.75 92.70 L574.00 92.17 L573.25 92.97 L572.50 91.05 L571.75 91.56 L571.00 93.33 L570.25 92.42 L569.50 92.80 L568.75 91.60 L568.00 92.46 L567.25 91.98 L566.50 91.32 L565.75 90.89 L565.00 91.82 L564.25 92.44 L563.50 93.15 L562.75 91.05 L562.00 91.57 L561.25 90.84 L560.50 91.89 L559.75 93.54 L559.00 91.37 L558.25 93.18 L557.50 90.97 L556.75 92.00 L556.00 92.22 L555.25 91.80 L554.50 90.92 L553.75 91.15Z" fill="#2a967e"/>
<path d="M553.75 129.95 L554.50 128.59 L555.25 129.14 L556.00 128.23 L556.75 129.01 L557.50 129.27 L558.25 129.42 L559.00 129.36 L559.75 128.78 L560.50 128.15 L561.25 129.15 L562.00 128.42 L562.75 130.28 L563.50 130.41 L564.25 130.41 L565.00 128.56 L565.75 130.20 L566.50 128.88 L567.25 128.30 L568.00 130.03 L568.75 129.56 L569.50 128.03 L570.25 130.18 L571.00 129.26 L571.75 130.09 L572.50 128.72 L573.25 129.16 L574.00 130.55 L574.75 128.98 L575.50 130.43 L576.25 128.55 L577.00 130.33 L577.75 130.50 L578.50 129.90 L579.25 129.50 L580.00 128.47 L580.75 130.21 L581.50 129.12 L582.25 130.37 L583.00 128.81 L583.75 130.41 L584.50 128.95 L585.25 130.38 L586.00 130.43 L586.75 129.42 L587.50 129.16 L588.25 129.90 L589.00 129.23 L589.75 130.32 L590.50 130.47 L591.25 129.79 L592.00 128.63 L592.75 129.30 L593.50 129.70 L594.25 129.95 L595.00 128.69 L595.75 130.11 L596.50 128.17 L597.25 128.47 L598.00 129.31 L598.75 129.58 L599.50 128.81 L600.25 129.71 L601.00 128.76 L601.75 129.55 L602.50 130.46 L603.25 130.42 L604.00 129.94 L604.75 130.38 L605.50 128.34 L606.25 129.87 L607.00 129.84 L607.75 130.19 L608.50 129.92 L609.25 128.07 L610.00 129.96 L610.75 129.80 L611.50 130.60 L612.25 129.37 L613.00 130.08 L613.75 130.59 L614.50 130.37 L615.25 130.49 L616.00 129.81 L616.75 129.08 L617.50 128.65 L618.25 128.74 L619.00 129.59 L619.75 128.04 L620.50 128.72 L621.25 130.49 L622.00 128.28 L622.75 128.69 L623.50 130.24 L624.25 129.29 L625.00 128.51 L625.75 129.08 L626.50 128.82 L627.25 130.00 L628.00 130.25 L628.75 130.33 L629.50 129.15 L630.25 128.97 L631.00 129.33 L631.75 128.53 L632.50 129.29 L633.25 128.89 L634.00 128.68 L634.75 130.41 L635.50 128.70 L636.25 128.68 L637.00 129.32 L637.75 129.35 L638.50 128.61 L639.25 128.93 L640.00 130.22 L640.75 128.67 L641.50 129.12 L642.25 130.44 L643.00 128.85 L643.75 128.84 L644.50 129.26 L645.25 129.39 L646.00 128.28 L646.75 128.06 L647.50 130.55 L648.25 128.47 L649.00 129.43 L649.75 130.05 L650.50 130.05 L651.25 130.23 L652.00 128.12 L652.75 128.47 L653.50 128.29 L654.25 130.00 L655.00 129.34 L655.75 130.59 L656.50 129.43 L656.50 137.99 L655.75 138.48 L655.00 137.26 L654.25 139.53 L653.50 139.03 L652.75 138.52 L652.00 137.54 L651.25 138.56 L650.50 138.71 L649.75 139.66 L649.00 137.90 L648.25 139.72 L647.50 138.39 L646.75 139.63 L646.00 137.72 L645.25 137.51 L644.50 138.41 L643.75 137.96 L643.00 139.00 L642.25 137.90 L641.50 137.23 L640.75 137.99 L640.00 137.86 L639.25 137.40 L638.50 138.80 L637.75 138.98 L637.00 138.19 L636.25 139.74 L635.50 137.73 L634.75 137.89 L634.00 137.86 L633.25 137.37 L632.50 138.59 L631.75 139.15 L631.00 137.21 L630.25 138.97 L629.50 138.83 L628.75 139.37 L628.00 138.14 L627.25 137.28 L626.50 139.00 L625.75 139.52 L625.00 139.35 L624.25 139.37 L623.50 138.56 L622.75 139.31 L622.00 138.83 L621.25 139.37 L620.50 138.87 L619.75 137.59 L619.00 138.05 L618.25 139.49 L617.50 138.91 L616.75 138.58 L616.00 137.81 L615.25 137.26 L614.50 138.24 L613.75 137.89 L613.00 138.51 L612.25 138.51 L611.50 138.19 L610.75 138.13 L610.00 139.71 L609.25 138.62 L608.50 139.70 L607.75 138.36 L607.00 138.39 L606.25 137.83 L605.50 138.94 L604.75 139.39 L604.00 137.62 L603.25 139.13 L602.50 137.54 L601.75 138.10 L601.00 138.85 L600.25 139.36 L599.50 139.75 L598.75 138.52 L598.00 139.37 L597.25 138.32 L596.50 137.48 L595.75 138.43 L595.00 138.63 L594.25 137.24 L593.50 137.25 L592.75 137.66 L592.00 137.95 L591.25 137.99 L590.50 137.72 L589.75 137.62 L589.00 137.82 L588.25 137.54 L587.50 139.61 L586.75 138.08 L586.00 139.44 L585.25 139.43 L584.50 139.28 L583.75 139.64 L583.00 138.31 L582.25 137.35 L581.50 139.02 L580.75 139.59 L580.00 137.87 L579.25 139.57 L578.50 137.54 L577.75 139.23 L577.00 137.89 L576.25 139.73 L575.50 139.76 L574.75 138.53 L574.00 138.06 L573.25 138.35 L572.50 137.25 L571.75 138.03 L571.00 138.08 L570.25 138.32 L569.50 139.36 L568.75 138.47 L568.00 139.68 L567.25 139.72 L566.50 137.57 L565.75 139.06 L565.00 139.53 L564.25 138.94 L563.50 137.83 L562.75 138.35 L562.00 137.56 L561.25 139.65 L560.50 137.87 L559.75 139.48 L559.00 139.65 L558.25 138.59 L557.50 139.00 L556.75 138.51 L556.00 138.35 L555.25 139.18 L554.50 138.52 L553.75 137.92Z" fill="#26967e"/>
<path d="M657.15 130 L659.75 133.9 L657.15 137.8Z" fill="#259a80"/>
<rect x="661.25" y="85.7" width="106" height="2.7" fill="#18a291"/>
<path d="M662.45 82.16 V91.73 M665.09 81.74 V92.92 M667.73 82.50 V92.70 M670.37 80.49 V91.19 M673.01 80.28 V92.61 M675.65 80.34 V91.60 M678.29 81.61 V91.84 M680.93 80.10 V92.31 M683.57 81.63 V91.93 M686.21 81.84 V91.02 M688.85 82.26 V92.90 M691.49 81.81 V93.15 M694.13 81.90 V91.54 M696.77 81.27 V91.36 M699.41 81.60 V93.19 M702.05 80.38 V92.85 M704.69 80.99 V93.09 M707.33 80.24 V92.22 M709.97 80.77 V91.02 M712.61 80.74 V91.98 M715.25 80.69 V92.45 M717.89 81.81 V91.02 M720.53 80.28 V91.21 M723.17 81.37 V91.72 M725.81 81.79 V92.67 M728.45 80.16 V91.52 M731.09 80.93 V91.62 M733.73 81.16 V91.85 M736.37 82.10 V91.29 M739.01 82.00 V93.07 M741.65 81.31 V91.43 M744.29 80.32 V93.29 M746.93 81.42 V91.24 M749.57 82.04 V91.12 M752.21 81.68 V91.12 M754.85 81.93 V91.52 M757.49 81.13 V93.03 M760.13 80.70 V91.89 M762.77 81.51 V92.16 M765.41 81.60 V91.71" stroke="#18a291" stroke-width="1.35" fill="none"/>
<clipPath id="cw3a"><rect x="768.75" y="50" width="106" height="47"/></clipPath>
<rect x="768.75" y="86.5" width="106" height="1" fill="#267f86"/><path d="M775.35 80.00 L776.75 80.00 L776.95 84.40 L781.65 86.60 L781.65 87.40 L776.95 89.60 L776.75 94.00 L775.35 94.00Z M781.97 80.00 L783.37 80.00 L783.57 84.40 L788.27 86.60 L788.27 87.40 L783.57 89.60 L783.37 94.00 L781.97 94.00Z M788.59 80.00 L789.99 80.00 L790.19 84.40 L794.89 86.60 L794.89 87.40 L790.19 89.60 L789.99 94.00 L788.59 94.00Z M795.21 80.00 L796.61 80.00 L796.81 84.40 L801.51 86.60 L801.51 87.40 L796.81 89.60 L796.61 94.00 L795.21 94.00Z M801.83 80.00 L803.23 80.00 L803.43 84.40 L808.13 86.60 L808.13 87.40 L803.43 89.60 L803.23 94.00 L801.83 94.00Z M808.45 80.00 L809.85 80.00 L810.05 84.40 L814.75 86.60 L814.75 87.40 L810.05 89.60 L809.85 94.00 L808.45 94.00Z M815.07 80.00 L816.47 80.00 L816.67 84.40 L821.37 86.60 L821.37 87.40 L816.67 89.60 L816.47 94.00 L815.07 94.00Z M821.69 80.00 L823.09 80.00 L823.29 84.40 L827.99 86.60 L827.99 87.40 L823.29 89.60 L823.09 94.00 L821.69 94.00Z M828.31 80.00 L829.71 80.00 L829.91 84.40 L834.61 86.60 L834.61 87.40 L829.91 89.60 L829.71 94.00 L828.31 94.00Z M834.93 80.00 L836.33 80.00 L836.53 84.40 L841.23 86.60 L841.23 87.40 L836.53 89.60 L836.33 94.00 L834.93 94.00Z M841.55 80.00 L842.95 80.00 L843.15 84.40 L847.85 86.60 L847.85 87.40 L843.15 89.60 L842.95 94.00 L841.55 94.00Z M848.17 80.00 L849.57 80.00 L849.77 84.40 L854.47 86.60 L854.47 87.40 L849.77 89.60 L849.57 94.00 L848.17 94.00Z M854.79 80.00 L856.19 80.00 L856.39 84.40 L861.09 86.60 L861.09 87.40 L856.39 89.60 L856.19 94.00 L854.79 94.00Z M861.41 80.00 L862.81 80.00 L863.01 84.40 L867.71 86.60 L867.71 87.40 L863.01 89.60 L862.81 94.00 L861.41 94.00Z M868.03 80.00 L869.43 80.00 L869.63 84.40 L874.33 86.60 L874.33 87.40 L869.63 89.60 L869.43 94.00 L868.03 94.00Z M874.65 80.00 L876.05 80.00 L876.25 84.40 L880.95 86.60 L880.95 87.40 L876.25 89.60 L876.05 94.00 L874.65 94.00Z" fill="#267f86" clip-path="url(#cw3a)"/>
<rect x="769.75" y="133.5" width="105" height="1" fill="#267f86"/><path d="M780.30 129.80 L782.30 130.80 L791.30 133.60 L791.30 134.40 L782.30 137.20 L780.30 138.20Z M793.55 129.80 L795.55 130.80 L804.55 133.60 L804.55 134.40 L795.55 137.20 L793.55 138.20Z M806.80 129.80 L808.80 130.80 L817.80 133.60 L817.80 134.40 L808.80 137.20 L806.80 138.20Z M820.05 129.80 L822.05 130.80 L831.05 133.60 L831.05 134.40 L822.05 137.20 L820.05 138.20Z M833.30 129.80 L835.30 130.80 L844.30 133.60 L844.30 134.40 L835.30 137.20 L833.30 138.20Z M846.55 129.80 L848.55 130.80 L857.55 133.60 L857.55 134.40 L848.55 137.20 L846.55 138.20Z M859.80 129.80 L861.80 130.80 L870.80 133.60 L870.80 134.40 L861.80 137.20 L859.80 138.20Z M873.05 129.80 L875.05 130.80 L884.05 133.60 L884.05 134.40 L875.05 137.20 L873.05 138.20Z" fill="#267f86" clip-path="url(#cw3)"/>
<clipPath id="cw3"><rect x="768.75" y="98" width="106" height="47"/></clipPath>
<clipPath id="cw4"><rect x="876.25" y="98" width="106" height="47"/></clipPath>
<rect x="876.25" y="132.6" width="106" height="2.8" fill="#257e86"/><path d="M866.00 128.40 L867.60 129.20 L879.00 132.40 L879.00 135.60 L867.60 138.80 L866.00 139.60Z M879.25 128.40 L880.85 129.20 L892.25 132.40 L892.25 135.60 L880.85 138.80 L879.25 139.60Z M892.50 128.40 L894.10 129.20 L905.50 132.40 L905.50 135.60 L894.10 138.80 L892.50 139.60Z M905.75 128.40 L907.35 129.20 L918.75 132.40 L918.75 135.60 L907.35 138.80 L905.75 139.60Z M919.00 128.40 L920.60 129.20 L932.00 132.40 L932.00 135.60 L920.60 138.80 L919.00 139.60Z M932.25 128.40 L933.85 129.20 L945.25 132.40 L945.25 135.60 L933.85 138.80 L932.25 139.60Z M945.50 128.40 L947.10 129.20 L958.50 132.40 L958.50 135.60 L947.10 138.80 L945.50 139.60Z M958.75 128.40 L960.35 129.20 L971.75 132.40 L971.75 135.60 L960.35 138.80 L958.75 139.60Z M972.00 128.40 L973.60 129.20 L985.00 132.40 L985.00 135.60 L973.60 138.80 L972.00 139.60Z" fill="#257e86" clip-path="url(#cw4)"/>
<path d="M361.6 67.20 L372.4 73.60 L361.6 80.00Z" fill="#7fd4d0" clip-path="url(#cliprows)"/>
<path d="M361.6 115.20 L372.4 121.60 L361.6 128.00Z" fill="#7fd4d0" clip-path="url(#cliprows)"/>
<path d="M361.6 162.80 L372.4 169.20 L361.6 175.60Z" fill="#7fd4d0" clip-path="url(#cliprows)"/>
<path d="M452.85 55.90 L463.55 62.45 L452.85 69.00Z" fill="#648880" clip-path="url(#cliprows)"/>
<g clip-path="url(#cliprows)"><rect x="448.60" y="100.80" width="18.4" height="18.2" rx="2.2" fill="#18736f"/><path d="M451.75 102.70 L463.15 110.00 L451.75 117.40Z" fill="#a2f2ec"/></g>
<rect x="549.40" y="98" width="1.1" height="46.4" fill="#aaeeee" fill-opacity=".72"/>
<path d="M452.85 150.50 L463.55 157.05 L452.85 163.60Z" fill="#648880" clip-path="url(#cliprows)"/>
<path d="M560.35 55.90 L571.05 62.45 L560.35 69.00Z" fill="#30b588" clip-path="url(#cliprows)"/>
<g clip-path="url(#cliprows)"><rect x="556.10" y="100.80" width="18.4" height="18.2" rx="2.2" fill="#18736f"/><path d="M559.25 102.70 L570.65 110.00 L559.25 117.40Z" fill="#a2f2ec"/></g>
<rect x="653.70" y="98" width="1.1" height="46.4" fill="#aaeeee" fill-opacity=".72"/>
<path d="M560.35 150.50 L571.05 157.05 L560.35 163.60Z" fill="#30b588" clip-path="url(#cliprows)"/>
<g clip-path="url(#cliprows)"><rect x="663.60" y="53.40" width="18.4" height="18.2" rx="2.2" fill="#18736f"/><path d="M666.75 55.30 L678.15 62.60 L666.75 70.00Z" fill="#a2f2ec"/></g>
<rect x="764.80" y="50" width="1.1" height="47.1" fill="#aaeeee" fill-opacity=".72"/>
<path d="M775.35 55.90 L786.05 62.45 L775.35 69.00Z" fill="#5886b9" clip-path="url(#cliprows)"/>
<g clip-path="url(#cliprows)"><rect x="771.10" y="100.80" width="18.4" height="18.2" rx="2.2" fill="#18736f"/><path d="M774.25 102.70 L785.65 110.00 L774.25 117.40Z" fill="#a2f2ec"/></g>
<rect x="862.80" y="98" width="1.1" height="46.4" fill="#aaeeee" fill-opacity=".72"/>
<path d="M775.35 150.50 L786.05 157.05 L775.35 163.60Z" fill="#5886b9" clip-path="url(#cliprows)"/>
<g clip-path="url(#cliprows)"><rect x="878.60" y="100.80" width="18.4" height="18.2" rx="2.2" fill="#18736f"/><path d="M881.75 102.70 L893.15 110.00 L881.75 117.40Z" fill="#a2f2ec"/></g>
<rect x="979.40" y="98" width="1.1" height="46.4" fill="#aaeeee" fill-opacity=".72"/>
<path d="M882.85 150.50 L893.55 157.05 L882.85 163.60Z" fill="#4098b6" clip-path="url(#cliprows)"/>
<g clip-path="url(#cliprows)"><rect x="986.10" y="148.00" width="18.4" height="18.2" rx="2.2" fill="#18736f"/><path d="M989.25 149.90 L1000.65 157.20 L989.25 164.60Z" fill="#a2f2ec"/></g>
<rect x="1077.50" y="145.6" width="1.1" height="20.9" fill="#aaeeee" fill-opacity=".72"/>
<g clip-path="url(#cliprows)"><rect x="1093.60" y="148.00" width="18.4" height="18.2" rx="2.2" fill="#18736f"/><path d="M1096.75 149.90 L1108.15 157.20 L1096.75 164.60Z" fill="#a2f2ec"/></g>
<rect x="1105.00" y="145.6" width="1.1" height="20.9" fill="#aaeeee" fill-opacity=".72"/>
<path d="M423.80 193.6 L429.40 196.6 L423.80 199.6Z" fill="#6cc6c2"/>
<path d="M528.92 193.6 L534.52 196.6 L528.92 199.6Z" fill="#6cc6c2"/>
<path d="M636.42 193.6 L642.02 196.6 L636.42 199.6Z" fill="#6cc6c2"/>
<path d="M743.92 193.6 L749.52 196.6 L743.92 199.6Z" fill="#6cc6c2"/>
<path d="M851.42 193.6 L857.02 196.6 L851.42 199.6Z" fill="#6cc6c2"/>
<path d="M958.92 193.6 L964.52 196.6 L958.92 199.6Z" fill="#6cc6c2"/>
<path d="M1066.42 193.6 L1072.02 196.6 L1066.42 199.6Z" fill="#6cc6c2"/>
<path d="M1173.92 193.6 L1179.52 196.6 L1173.92 199.6Z" fill="#6cc6c2"/>
<path d="M1308.86 193.6 L1314.46 196.6 L1308.86 199.6Z" fill="#56b0ad"/>
<path d="M1501.92 193.6 L1507.52 196.6 L1501.92 199.6Z" fill="#56b0ad"/>
<g><path d="M460.08 250.76 A16.1 16.1 0 1 1 481.62 250.76" stroke="#515151" stroke-width="3.0" fill="none"/><rect x="469.75" y="221.0" width="2.2" height="2.6" fill="#f58a1a"/><circle cx="470.85" cy="238.8" r="12.6" fill="#1f1f1f"/><circle cx="470.85" cy="238.8" r="10.8" fill="url(#kg)"/><path d="M470.85 235.20 L470.85 228.00" stroke="#fff" stroke-width="3.3"/></g>
<g><path d="M460.08 287.26 A16.1 16.1 0 1 1 481.62 287.26" stroke="#515151" stroke-width="3.0" fill="none"/><rect x="469.75" y="257.5" width="2.2" height="2.6" fill="#f58a1a"/><circle cx="470.85" cy="275.3" r="12.6" fill="#1f1f1f"/><circle cx="470.85" cy="275.3" r="10.8" fill="url(#kg)"/><path d="M470.85 271.70 L470.85 264.50" stroke="#fff" stroke-width="3.3"/></g>
<g><path d="M460.08 323.76 A16.1 16.1 0 1 1 481.62 323.76" stroke="#515151" stroke-width="3.0" fill="none"/><rect x="469.75" y="294.0" width="2.2" height="2.6" fill="#f58a1a"/><circle cx="470.85" cy="311.8" r="12.6" fill="#1f1f1f"/><circle cx="470.85" cy="311.8" r="10.8" fill="url(#kg)"/><path d="M470.85 308.20 L470.85 301.00" stroke="#fff" stroke-width="3.3"/></g>
<g><path d="M567.58 250.76 A16.1 16.1 0 1 1 589.12 250.76" stroke="#515151" stroke-width="3.0" fill="none"/><path d="M578.35 222.70 A16.1 16.1 0 0 1 591.54 229.57" stroke="#252a33" stroke-width="3.4" fill="none"/><path d="M578.35 222.50 A16.3 16.3 0 0 1 591.70 229.45" stroke="#f58a1a" stroke-width="2.9" fill="none"/><circle cx="578.35" cy="238.8" r="12.6" fill="#1f1f1f"/><circle cx="578.35" cy="238.8" r="10.8" fill="url(#kg)"/><path d="M581.30 236.74 L587.20 232.61" stroke="#fff" stroke-width="3.3"/></g>
<g><path d="M567.58 287.26 A16.1 16.1 0 1 1 589.12 287.26" stroke="#515151" stroke-width="3.0" fill="none"/><path d="M567.58 287.26 A16.1 16.1 0 0 1 565.16 266.07" stroke="#252a33" stroke-width="3.4" fill="none"/><path d="M567.44 287.41 A16.3 16.3 0 0 1 565.00 265.95" stroke="#f58a1a" stroke-width="2.9" fill="none"/><circle cx="578.35" cy="275.3" r="12.6" fill="#1f1f1f"/><circle cx="578.35" cy="275.3" r="10.8" fill="url(#kg)"/><path d="M575.40 273.24 L569.50 269.11" stroke="#fff" stroke-width="3.3"/></g>
<g><path d="M567.58 323.76 A16.1 16.1 0 1 1 589.12 323.76" stroke="#515151" stroke-width="3.0" fill="none"/><circle cx="578.35" cy="311.8" r="12.6" fill="#1f1f1f"/><circle cx="578.35" cy="311.8" r="10.8" fill="url(#kg)"/><path d="M575.80 314.35 L570.71 319.44" stroke="#fff" stroke-width="3.3"/></g>
<g><path d="M675.08 250.76 A16.1 16.1 0 1 1 696.62 250.76" stroke="#515151" stroke-width="3.0" fill="none"/><circle cx="685.85" cy="238.8" r="12.6" fill="#1f1f1f"/><circle cx="685.85" cy="238.8" r="10.8" fill="url(#kg)"/><path d="M683.30 241.35 L678.21 246.44" stroke="#fff" stroke-width="3.3"/></g>
<g><path d="M675.08 287.26 A16.1 16.1 0 1 1 696.62 287.26" stroke="#515151" stroke-width="3.0" fill="none"/><path d="M675.08 287.26 A16.1 16.1 0 0 1 671.63 282.86" stroke="#252a33" stroke-width="3.4" fill="none"/><path d="M674.94 287.41 A16.3 16.3 0 0 1 671.46 282.95" stroke="#f58a1a" stroke-width="2.9" fill="none"/><circle cx="685.85" cy="275.3" r="12.6" fill="#1f1f1f"/><circle cx="685.85" cy="275.3" r="10.8" fill="url(#kg)"/><path d="M682.67 276.99 L676.31 280.37" stroke="#fff" stroke-width="3.3"/></g>
<g fill="none" stroke="#33d6f0" stroke-width="2.5" stroke-linecap="butt"><path d="M680.22 308.55 A7.7 7.7 0 0 1 691.48 308.55"/><path d="M677.00 305.55 A12.1 12.1 0 0 1 694.70 305.55"/><circle cx="685.85" cy="313.79999999999995" r="3.2" fill="#33d6f0" stroke="none"/></g>
<g><path d="M782.58 250.76 A16.1 16.1 0 1 1 804.12 250.76" stroke="#515151" stroke-width="3.0" fill="none"/><circle cx="793.35" cy="238.8" r="12.6" fill="#1f1f1f"/><circle cx="793.35" cy="238.8" r="10.8" fill="url(#kg)"/><path d="M790.80 241.35 L785.71 246.44" stroke="#fff" stroke-width="3.3"/></g>
<g><path d="M782.58 287.26 A16.1 16.1 0 1 1 804.12 287.26" stroke="#515151" stroke-width="3.0" fill="none"/><path d="M793.35 259.20 A16.1 16.1 0 0 1 808.28 269.27" stroke="#252a33" stroke-width="3.4" fill="none"/><path d="M793.35 259.00 A16.3 16.3 0 0 1 808.46 269.19" stroke="#f58a1a" stroke-width="2.9" fill="none"/><circle cx="793.35" cy="275.3" r="12.6" fill="#1f1f1f"/><circle cx="793.35" cy="275.3" r="10.8" fill="url(#kg)"/><path d="M796.69 273.95 L803.36 271.25" stroke="#fff" stroke-width="3.3"/></g>
<g><path d="M782.58 323.76 A16.1 16.1 0 1 1 804.12 323.76" stroke="#515151" stroke-width="3.0" fill="none"/><path d="M782.58 323.76 A16.1 16.1 0 0 1 777.73 315.69" stroke="#252a33" stroke-width="3.4" fill="none"/><path d="M782.44 323.91 A16.3 16.3 0 0 1 777.53 315.74" stroke="#f58a1a" stroke-width="2.9" fill="none"/><circle cx="793.35" cy="311.8" r="12.6" fill="#1f1f1f"/><circle cx="793.35" cy="311.8" r="10.8" fill="url(#kg)"/><path d="M789.86 312.67 L782.87 314.41" stroke="#fff" stroke-width="3.3"/></g>
<g><path d="M890.08 250.76 A16.1 16.1 0 1 1 911.62 250.76" stroke="#515151" stroke-width="3.0" fill="none"/><path d="M894.82 223.87 A16.1 16.1 0 0 1 900.85 222.70" stroke="#252a33" stroke-width="3.4" fill="none"/><path d="M894.74 223.69 A16.3 16.3 0 0 1 900.85 222.50" stroke="#f58a1a" stroke-width="2.9" fill="none"/><circle cx="900.85" cy="238.8" r="12.6" fill="#1f1f1f"/><circle cx="900.85" cy="238.8" r="10.8" fill="url(#kg)"/><path d="M899.50 235.46 L896.80 228.79" stroke="#fff" stroke-width="3.3"/></g>
<g><path d="M890.08 287.26 A16.1 16.1 0 1 1 911.62 287.26" stroke="#515151" stroke-width="3.0" fill="none"/><path d="M890.08 287.26 A16.1 16.1 0 0 1 907.40 260.59" stroke="#252a33" stroke-width="3.4" fill="none"/><path d="M889.94 287.41 A16.3 16.3 0 0 1 907.48 260.41" stroke="#f58a1a" stroke-width="2.9" fill="none"/><circle cx="900.85" cy="275.3" r="12.6" fill="#1f1f1f"/><circle cx="900.85" cy="275.3" r="10.8" fill="url(#kg)"/><path d="M902.31 272.01 L905.24 265.43" stroke="#fff" stroke-width="3.3"/></g>
<g fill="none" stroke="#33d6f0" stroke-width="2.5" stroke-linecap="butt"><path d="M895.22 308.55 A7.7 7.7 0 0 1 906.48 308.55"/><path d="M892.00 305.55 A12.1 12.1 0 0 1 909.70 305.55"/><circle cx="900.85" cy="313.79999999999995" r="3.2" fill="#33d6f0" stroke="none"/></g>
<g><path d="M997.58 250.76 A16.1 16.1 0 1 1 1019.12 250.76" stroke="#515151" stroke-width="3.0" fill="none"/><path d="M997.58 250.76 A16.1 16.1 0 1 1 1020.68 228.45" stroke="#252a33" stroke-width="3.4" fill="none"/><path d="M997.44 250.91 A16.3 16.3 0 1 1 1020.84 228.32" stroke="#f58a1a" stroke-width="2.9" fill="none"/><circle cx="1008.35" cy="238.8" r="12.6" fill="#1f1f1f"/><circle cx="1008.35" cy="238.8" r="10.8" fill="url(#kg)"/><path d="M1011.11 236.49 L1016.62 231.86" stroke="#fff" stroke-width="3.3"/></g>
<g><path d="M997.58 287.26 A16.1 16.1 0 1 1 1019.12 287.26" stroke="#515151" stroke-width="3.0" fill="none"/><path d="M997.58 287.26 A16.1 16.1 0 0 1 993.76 268.50" stroke="#252a33" stroke-width="3.4" fill="none"/><path d="M997.44 287.41 A16.3 16.3 0 0 1 993.58 268.41" stroke="#f58a1a" stroke-width="2.9" fill="none"/><circle cx="1008.35" cy="275.3" r="12.6" fill="#1f1f1f"/><circle cx="1008.35" cy="275.3" r="10.8" fill="url(#kg)"/><path d="M1005.09 273.78 L998.56 270.74" stroke="#fff" stroke-width="3.3"/></g>
<g><path d="M997.58 323.76 A16.1 16.1 0 1 1 1019.12 323.76" stroke="#515151" stroke-width="3.0" fill="none"/><path d="M997.58 323.76 A16.1 16.1 0 0 1 992.27 312.64" stroke="#252a33" stroke-width="3.4" fill="none"/><path d="M997.44 323.91 A16.3 16.3 0 0 1 992.07 312.65" stroke="#f58a1a" stroke-width="2.9" fill="none"/><circle cx="1008.35" cy="311.8" r="12.6" fill="#1f1f1f"/><circle cx="1008.35" cy="311.8" r="10.8" fill="url(#kg)"/><path d="M1004.75 311.99 L997.56 312.37" stroke="#fff" stroke-width="3.3"/></g>
<path d="M1138.45 273 h11.4 M1144.15 267.3 v11.4" stroke="#8c8c8c" stroke-width="2.3"/>
<rect x="1232.3" y="223" width="37.4" height="28.8" rx="3" fill="url(#bg)"/><path d="M1259.9 235.6 h6 l-3 3.6z" fill="#cfcfcf"/>
<g><path d="M1239.83 287.26 A16.1 16.1 0 1 1 1261.37 287.26" stroke="#515151" stroke-width="3.0" fill="none"/><path d="M1239.83 287.26 A16.1 16.1 0 0 1 1260.29 262.44" stroke="#252a33" stroke-width="3.4" fill="none"/><path d="M1239.69 287.41 A16.3 16.3 0 0 1 1260.41 262.28" stroke="#f58a1a" stroke-width="2.9" fill="none"/><circle cx="1250.6" cy="275.3" r="12.6" fill="#1f1f1f"/><circle cx="1250.6" cy="275.3" r="10.8" fill="url(#kg)"/><path d="M1252.77 272.42 L1257.10 266.67" stroke="#fff" stroke-width="3.3"/></g>
<g><path d="M1239.83 323.76 A16.1 16.1 0 1 1 1261.37 323.76" stroke="#515151" stroke-width="3.0" fill="none"/><circle cx="1250.6" cy="311.8" r="12.6" fill="#1f1f1f"/><circle cx="1250.6" cy="311.8" r="10.8" fill="url(#kg)"/><path d="M1248.05 314.35 L1242.96 319.44" stroke="#fff" stroke-width="3.3"/></g>
<g><path d="M1347.23 250.76 A16.1 16.1 0 1 1 1368.77 250.76" stroke="#515151" stroke-width="3.0" fill="none"/><path d="M1358.00 222.70 A16.1 16.1 0 0 1 1373.31 233.82" stroke="#252a33" stroke-width="3.4" fill="none"/><path d="M1358.00 222.50 A16.3 16.3 0 0 1 1373.50 233.76" stroke="#f58a1a" stroke-width="2.9" fill="none"/><circle cx="1358.0" cy="238.8" r="12.6" fill="#1f1f1f"/><circle cx="1358.0" cy="238.8" r="10.8" fill="url(#kg)"/><path d="M1361.42 237.69 L1368.27 235.46" stroke="#fff" stroke-width="3.3"/></g>
<g><path d="M1347.23 287.26 A16.1 16.1 0 1 1 1368.77 287.26" stroke="#515151" stroke-width="3.0" fill="none"/><path d="M1358.00 259.20 A16.1 16.1 0 0 1 1371.50 266.53" stroke="#252a33" stroke-width="3.4" fill="none"/><path d="M1358.00 259.00 A16.3 16.3 0 0 1 1371.67 266.42" stroke="#f58a1a" stroke-width="2.9" fill="none"/><circle cx="1358.0" cy="275.3" r="12.6" fill="#1f1f1f"/><circle cx="1358.0" cy="275.3" r="10.8" fill="url(#kg)"/><path d="M1361.02 273.34 L1367.06 269.42" stroke="#fff" stroke-width="3.3"/></g>
<g><path d="M1347.23 323.76 A16.1 16.1 0 1 1 1368.77 323.76" stroke="#515151" stroke-width="3.0" fill="none"/><circle cx="1358.0" cy="311.8" r="12.6" fill="#1f1f1f"/><circle cx="1358.0" cy="311.8" r="10.8" fill="url(#kg)"/><path d="M1355.45 314.35 L1350.36 319.44" stroke="#fff" stroke-width="3.3"/></g>
<g><path d="M1433.03 250.76 A16.1 16.1 0 1 1 1454.57 250.76" stroke="#515151" stroke-width="3.0" fill="none"/><path d="M1433.03 250.76 A16.1 16.1 0 0 1 1431.84 228.03" stroke="#252a33" stroke-width="3.4" fill="none"/><path d="M1432.89 250.91 A16.3 16.3 0 0 1 1431.69 227.89" stroke="#f58a1a" stroke-width="2.9" fill="none"/><circle cx="1443.8000000000002" cy="238.8" r="12.6" fill="#1f1f1f"/><circle cx="1443.8000000000002" cy="238.8" r="10.8" fill="url(#kg)"/><path d="M1441.12 236.39 L1435.77 231.57" stroke="#fff" stroke-width="3.3"/></g>
<g fill="none" stroke="#33d6f0" stroke-width="2.5" stroke-linecap="butt"><path d="M1438.17 272.05 A7.7 7.7 0 0 1 1449.43 272.05"/><path d="M1434.95 269.05 A12.1 12.1 0 0 1 1452.65 269.05"/><circle cx="1443.8000000000002" cy="277.3" r="3.2" fill="#33d6f0" stroke="none"/></g>
<g><path d="M1433.03 323.76 A16.1 16.1 0 1 1 1454.57 323.76" stroke="#515151" stroke-width="3.0" fill="none"/><rect x="1442.7000000000003" y="294.0" width="2.2" height="2.6" fill="#f58a1a"/><circle cx="1443.8000000000002" cy="311.8" r="12.6" fill="#1f1f1f"/><circle cx="1443.8000000000002" cy="311.8" r="10.8" fill="url(#kg)"/><path d="M1443.49 308.21 L1442.86 301.04" stroke="#fff" stroke-width="3.3"/></g>
<g><path d="M518.51 370.34 A16.6 16.6 0 1 1 541.99 370.34" stroke="#53afac" stroke-width="2.2" fill="none"/><circle cx="530.25" cy="358.6" r="15.5" fill="#3a9693"/><circle cx="530.25" cy="358.6" r="12" fill="#277f7c"/><circle cx="530.25" cy="358.6" r="10.5" fill="url(#sg)"/><path d="M527.00 361.85 L522.97 365.88" stroke="#a6f0ec" stroke-width="3.2"/></g>
<g><path d="M518.51 404.94 A16.6 16.6 0 1 1 541.99 404.94" stroke="#53afac" stroke-width="2.2" fill="none"/><circle cx="530.25" cy="393.2" r="15.5" fill="#3a9693"/><circle cx="530.25" cy="393.2" r="12" fill="#277f7c"/><circle cx="530.25" cy="393.2" r="10.5" fill="url(#sg)"/><path d="M527.00 396.45 L522.97 400.48" stroke="#a6f0ec" stroke-width="3.2"/></g>
<g><path d="M460.49 453.41 A20.6 20.6 0 1 1 486.41 453.41" stroke="#52aeab" stroke-width="2.4" fill="none"/><circle cx="473.45" cy="437.4" r="18.6" fill="#3b9693"/><rect x="472.05" y="415.5" width="2.8" height="2.2" fill="#b2b064"/><circle cx="473.45" cy="437.4" r="16.7" fill="#277f7c"/><circle cx="473.45" cy="437.4" r="15.3" fill="url(#sg)"/><rect x="471.75" y="423.0" width="3.4" height="10.8" fill="#a6f0ec"/></g>
<circle cx="473.45" cy="474.7" r="5.7" fill="#a8f2ef"/>
<path d="M477.65 504.6 h-5.6 a2.2 2.2 0 0 0 0 4.5 h3.1 a2.2 2.2 0 0 1 0 4.5 h-6" stroke="#a8f2ef" stroke-width="2.7" fill="none"/>
<g><path d="M626.01 370.34 A16.6 16.6 0 1 1 649.49 370.34" stroke="#53afac" stroke-width="2.2" fill="none"/><circle cx="637.75" cy="358.6" r="15.5" fill="#3a9693"/><circle cx="637.75" cy="358.6" r="12" fill="#277f7c"/><circle cx="637.75" cy="358.6" r="10.5" fill="url(#sg)"/><path d="M634.50 361.85 L630.47 365.88" stroke="#a6f0ec" stroke-width="3.2"/></g>
<g><path d="M626.01 404.94 A16.6 16.6 0 1 1 649.49 404.94" stroke="#53afac" stroke-width="2.2" fill="none"/><circle cx="637.75" cy="393.2" r="15.5" fill="#3a9693"/><circle cx="637.75" cy="393.2" r="12" fill="#277f7c"/><circle cx="637.75" cy="393.2" r="10.5" fill="url(#sg)"/><path d="M634.50 396.45 L630.47 400.48" stroke="#a6f0ec" stroke-width="3.2"/></g>
<g><path d="M567.99 453.41 A20.6 20.6 0 1 1 593.91 453.41" stroke="#52aeab" stroke-width="2.4" fill="none"/><circle cx="580.95" cy="437.4" r="18.6" fill="#3b9693"/><rect x="579.5500000000001" y="415.5" width="2.8" height="2.2" fill="#b2b064"/><circle cx="580.95" cy="437.4" r="16.7" fill="#277f7c"/><circle cx="580.95" cy="437.4" r="15.3" fill="url(#sg)"/><rect x="579.25" y="423.0" width="3.4" height="10.8" fill="#a6f0ec"/></g>
<circle cx="580.95" cy="474.7" r="5.7" fill="#6cc5c1"/>
<path d="M585.15 504.6 h-5.6 a2.2 2.2 0 0 0 0 4.5 h3.1 a2.2 2.2 0 0 1 0 4.5 h-6" stroke="#a8f2ef" stroke-width="2.7" fill="none"/>
<g><path d="M733.51 370.34 A16.6 16.6 0 1 1 756.99 370.34" stroke="#53afac" stroke-width="2.2" fill="none"/><circle cx="745.25" cy="358.6" r="15.5" fill="#3a9693"/><circle cx="745.25" cy="358.6" r="12" fill="#277f7c"/><circle cx="745.25" cy="358.6" r="10.5" fill="url(#sg)"/><path d="M742.00 361.85 L737.97 365.88" stroke="#a6f0ec" stroke-width="3.2"/></g>
<g><path d="M733.51 404.94 A16.6 16.6 0 1 1 756.99 404.94" stroke="#53afac" stroke-width="2.2" fill="none"/><circle cx="745.25" cy="393.2" r="15.5" fill="#3a9693"/><path d="M733.65 404.80 A16.4 16.4 0 0 1 739.11 377.99" stroke="#9be86a" stroke-width="2.4" fill="none"/><circle cx="745.25" cy="393.2" r="12" fill="#277f7c"/><circle cx="745.25" cy="393.2" r="10.5" fill="url(#sg)"/><path d="M743.53 388.93 L741.39 383.65" stroke="#a6f0ec" stroke-width="3.2"/></g>
<g><path d="M675.49 453.41 A20.6 20.6 0 1 1 701.41 453.41" stroke="#52aeab" stroke-width="2.4" fill="none"/><circle cx="688.45" cy="437.4" r="18.6" fill="#3b9693"/><rect x="687.0500000000001" y="415.5" width="2.8" height="2.2" fill="#b2b064"/><circle cx="688.45" cy="437.4" r="16.7" fill="#277f7c"/><circle cx="688.45" cy="437.4" r="15.3" fill="url(#sg)"/><rect x="686.75" y="423.0" width="3.4" height="10.8" fill="#a6f0ec"/></g>
<circle cx="688.45" cy="474.7" r="5.7" fill="#6cc5c1"/>
<path d="M692.65 504.6 h-5.6 a2.2 2.2 0 0 0 0 4.5 h3.1 a2.2 2.2 0 0 1 0 4.5 h-6" stroke="#a8f2ef" stroke-width="2.7" fill="none"/>
<g><path d="M841.01 370.34 A16.6 16.6 0 1 1 864.49 370.34" stroke="#53afac" stroke-width="2.2" fill="none"/><circle cx="852.75" cy="358.6" r="15.5" fill="#3a9693"/><circle cx="852.75" cy="358.6" r="12" fill="#277f7c"/><circle cx="852.75" cy="358.6" r="10.5" fill="url(#sg)"/><path d="M849.50 361.85 L845.47 365.88" stroke="#a6f0ec" stroke-width="3.2"/></g>
<g><path d="M841.01 404.94 A16.6 16.6 0 1 1 864.49 404.94" stroke="#53afac" stroke-width="2.2" fill="none"/><circle cx="852.75" cy="393.2" r="15.5" fill="#3a9693"/><path d="M841.15 404.80 A16.4 16.4 0 0 1 838.27 385.50" stroke="#9be86a" stroke-width="2.4" fill="none"/><circle cx="852.75" cy="393.2" r="12" fill="#277f7c"/><circle cx="852.75" cy="393.2" r="10.5" fill="url(#sg)"/><path d="M848.69 391.04 L843.66 388.36" stroke="#a6f0ec" stroke-width="3.2"/></g>
<g><path d="M782.99 453.41 A20.6 20.6 0 1 1 808.91 453.41" stroke="#52aeab" stroke-width="2.4" fill="none"/><circle cx="795.95" cy="437.4" r="18.6" fill="#3b9693"/><rect x="794.5500000000001" y="415.5" width="2.8" height="2.2" fill="#b2b064"/><circle cx="795.95" cy="437.4" r="16.7" fill="#277f7c"/><circle cx="795.95" cy="437.4" r="15.3" fill="url(#sg)"/><rect x="794.25" y="423.0" width="3.4" height="10.8" fill="#a6f0ec"/></g>
<circle cx="795.95" cy="474.7" r="5.7" fill="#6cc5c1"/>
<path d="M800.15 504.6 h-5.6 a2.2 2.2 0 0 0 0 4.5 h3.1 a2.2 2.2 0 0 1 0 4.5 h-6" stroke="#a8f2ef" stroke-width="2.7" fill="none"/>
<g><path d="M948.51 370.34 A16.6 16.6 0 1 1 971.99 370.34" stroke="#53afac" stroke-width="2.2" fill="none"/><circle cx="960.25" cy="358.6" r="15.5" fill="#3a9693"/><path d="M948.65 370.20 A16.4 16.4 0 0 1 952.55 344.12" stroke="#9be86a" stroke-width="2.4" fill="none"/><circle cx="960.25" cy="358.6" r="12" fill="#277f7c"/><circle cx="960.25" cy="358.6" r="10.5" fill="url(#sg)"/><path d="M958.09 354.54 L955.41 349.51" stroke="#a6f0ec" stroke-width="3.2"/></g>
<g><path d="M948.51 404.94 A16.6 16.6 0 1 1 971.99 404.94" stroke="#53afac" stroke-width="2.2" fill="none"/><circle cx="960.25" cy="393.2" r="15.5" fill="#3a9693"/><path d="M948.65 404.80 A16.4 16.4 0 0 1 947.69 382.66" stroke="#9be86a" stroke-width="2.4" fill="none"/><circle cx="960.25" cy="393.2" r="12" fill="#277f7c"/><circle cx="960.25" cy="393.2" r="10.5" fill="url(#sg)"/><path d="M956.73 390.24 L952.36 386.58" stroke="#a6f0ec" stroke-width="3.2"/></g>
<g><path d="M890.49 453.41 A20.6 20.6 0 1 1 916.41 453.41" stroke="#52aeab" stroke-width="2.4" fill="none"/><circle cx="903.45" cy="437.4" r="18.6" fill="#3b9693"/><rect x="902.0500000000001" y="415.5" width="2.8" height="2.2" fill="#b2b064"/><circle cx="903.45" cy="437.4" r="16.7" fill="#277f7c"/><circle cx="903.45" cy="437.4" r="15.3" fill="url(#sg)"/><rect x="901.75" y="423.0" width="3.4" height="10.8" fill="#a6f0ec"/></g>
<circle cx="903.45" cy="474.7" r="5.7" fill="#6cc5c1"/>
<path d="M907.65 504.6 h-5.6 a2.2 2.2 0 0 0 0 4.5 h3.1 a2.2 2.2 0 0 1 0 4.5 h-6" stroke="#a8f2ef" stroke-width="2.7" fill="none"/>
<g><path d="M1056.01 370.34 A16.6 16.6 0 1 1 1079.49 370.34" stroke="#53afac" stroke-width="2.2" fill="none"/><circle cx="1067.75" cy="358.6" r="15.5" fill="#3a9693"/><circle cx="1067.75" cy="358.6" r="12" fill="#277f7c"/><circle cx="1067.75" cy="358.6" r="10.5" fill="url(#sg)"/><path d="M1064.50 361.85 L1060.47 365.88" stroke="#a6f0ec" stroke-width="3.2"/></g>
<g><path d="M1056.01 404.94 A16.6 16.6 0 1 1 1079.49 404.94" stroke="#53afac" stroke-width="2.2" fill="none"/><circle cx="1067.75" cy="393.2" r="15.5" fill="#3a9693"/><path d="M1056.15 404.80 A16.4 16.4 0 0 1 1053.84 384.51" stroke="#9be86a" stroke-width="2.4" fill="none"/><circle cx="1067.75" cy="393.2" r="12" fill="#277f7c"/><circle cx="1067.75" cy="393.2" r="10.5" fill="url(#sg)"/><path d="M1063.85 390.76 L1059.02 387.74" stroke="#a6f0ec" stroke-width="3.2"/></g>
<g><path d="M997.99 453.41 A20.6 20.6 0 1 1 1023.91 453.41" stroke="#52aeab" stroke-width="2.4" fill="none"/><circle cx="1010.95" cy="437.4" r="18.6" fill="#3b9693"/><rect x="1009.5500000000001" y="415.5" width="2.8" height="2.2" fill="#b2b064"/><circle cx="1010.95" cy="437.4" r="16.7" fill="#277f7c"/><circle cx="1010.95" cy="437.4" r="15.3" fill="url(#sg)"/><rect x="1009.25" y="423.0" width="3.4" height="10.8" fill="#a6f0ec"/></g>
<circle cx="1010.95" cy="474.7" r="5.7" fill="#6cc5c1"/>
<path d="M1015.15 504.6 h-5.6 a2.2 2.2 0 0 0 0 4.5 h3.1 a2.2 2.2 0 0 1 0 4.5 h-6" stroke="#a8f2ef" stroke-width="2.7" fill="none"/>
<g><path d="M1163.51 370.34 A16.6 16.6 0 1 1 1186.99 370.34" stroke="#49a5a2" stroke-width="2.2" fill="none"/><circle cx="1175.25" cy="358.6" r="15.5" fill="#3a9693"/><circle cx="1175.25" cy="358.6" r="12" fill="#277f7c"/><circle cx="1175.25" cy="358.6" r="10.5" fill="url(#sgd)"/><path d="M1172.00 361.85 L1167.97 365.88" stroke="#6cc4c0" stroke-width="3.2"/></g>
<g><path d="M1163.51 404.94 A16.6 16.6 0 1 1 1186.99 404.94" stroke="#49a5a2" stroke-width="2.2" fill="none"/><circle cx="1175.25" cy="393.2" r="15.5" fill="#3a9693"/><circle cx="1175.25" cy="393.2" r="12" fill="#277f7c"/><circle cx="1175.25" cy="393.2" r="10.5" fill="url(#sgd)"/><path d="M1172.00 396.45 L1167.97 400.48" stroke="#6cc4c0" stroke-width="3.2"/></g>
<g><path d="M1105.49 453.41 A20.6 20.6 0 1 1 1131.41 453.41" stroke="#52aeab" stroke-width="2.4" fill="none"/><circle cx="1118.45" cy="437.4" r="18.6" fill="#3b9693"/><rect x="1117.05" y="415.5" width="2.8" height="2.2" fill="#b2b064"/><circle cx="1118.45" cy="437.4" r="16.7" fill="#277f7c"/><circle cx="1118.45" cy="437.4" r="15.3" fill="url(#sg)"/><rect x="1116.75" y="423.0" width="3.4" height="10.8" fill="#a6f0ec"/></g>
<circle cx="1118.45" cy="474.7" r="5.7" fill="#a8f2ef"/>
<path d="M1122.65 504.6 h-5.6 a2.2 2.2 0 0 0 0 4.5 h3.1 a2.2 2.2 0 0 1 0 4.5 h-6" stroke="#a8f2ef" stroke-width="2.7" fill="none"/>
<g><path d="M1298.26 370.34 A16.6 16.6 0 1 1 1321.74 370.34" stroke="#53afac" stroke-width="2.2" fill="none"/><circle cx="1310.0" cy="358.6" r="15.5" fill="#3a9693"/><circle cx="1310.0" cy="358.6" r="12" fill="#277f7c"/><circle cx="1310.0" cy="358.6" r="10.5" fill="url(#sgh)"/><path d="M1306.75 361.85 L1302.72 365.88" stroke="#1f7573" stroke-width="3.2"/></g>
<g><path d="M1298.26 404.94 A16.6 16.6 0 1 1 1321.74 404.94" stroke="#49a5a2" stroke-width="2.2" fill="none"/><circle cx="1310.0" cy="393.2" r="15.5" fill="#3a9693"/><circle cx="1310.0" cy="393.2" r="12" fill="#277f7c"/><circle cx="1310.0" cy="393.2" r="10.5" fill="url(#sgd)"/><path d="M1306.75 396.45 L1302.72 400.48" stroke="#6cc4c0" stroke-width="3.2"/></g>
<g><path d="M1240.24 453.41 A20.6 20.6 0 1 1 1266.16 453.41" stroke="#52aeab" stroke-width="2.4" fill="none"/><circle cx="1253.2" cy="437.4" r="18.6" fill="#3b9693"/><rect x="1251.8" y="415.5" width="2.8" height="2.2" fill="#b2b064"/><circle cx="1253.2" cy="437.4" r="16.7" fill="#277f7c"/><circle cx="1253.2" cy="437.4" r="15.3" fill="url(#sg)"/><rect x="1251.5" y="423.0" width="3.4" height="10.8" fill="#a6f0ec"/></g>
<circle cx="1253.2" cy="474.7" r="5.7" fill="#6cc5c1"/>
<path d="M1257.4 504.6 h-5.6 a2.2 2.2 0 0 0 0 4.5 h3.1 a2.2 2.2 0 0 1 0 4.5 h-6" stroke="#a8f2ef" stroke-width="2.7" fill="none"/>
<path d="M1256.5 361.8 H1252.0 V352.2 H1266.4 V361.8 H1259.2 M1263.0 358.0 L1259.0 361.8 L1263.0 365.59999999999997" stroke="#a0ebe7" stroke-width="1.6" fill="none"/>
<clipPath id="cr"><rect x="1333.6" y="213" width="84.4" height="300"/></clipPath>
<g clip-path="url(#cr)"><path d="M1405.86 370.34 A16.6 16.6 0 1 1 1429.34 370.34" stroke="#49a5a2" stroke-width="2.2" fill="none"/><circle cx="1417.6" cy="358.6" r="15.5" fill="#3a9693"/><circle cx="1417.6" cy="358.6" r="12" fill="#277f7c"/><circle cx="1417.6" cy="358.6" r="10.5" fill="url(#sgd)"/><path d="M1414.35 361.85 L1410.32 365.88" stroke="#6cc4c0" stroke-width="3.2"/></g>
<g clip-path="url(#cr)"><path d="M1405.86 404.94 A16.6 16.6 0 1 1 1429.34 404.94" stroke="#53afac" stroke-width="2.2" fill="none"/><circle cx="1417.6" cy="393.2" r="15.5" fill="#3a9693"/><circle cx="1417.6" cy="393.2" r="12" fill="#277f7c"/><circle cx="1417.6" cy="393.2" r="10.5" fill="url(#sgh)"/><path d="M1414.35 396.45 L1410.32 400.48" stroke="#1f7573" stroke-width="3.2"/></g>
<g><path d="M1347.84 453.41 A20.6 20.6 0 1 1 1373.76 453.41" stroke="#52aeab" stroke-width="2.4" fill="none"/><circle cx="1360.8" cy="437.4" r="18.6" fill="#3b9693"/><rect x="1359.3999999999999" y="415.5" width="2.8" height="2.2" fill="#b2b064"/><circle cx="1360.8" cy="437.4" r="16.7" fill="#277f7c"/><circle cx="1360.8" cy="437.4" r="15.3" fill="url(#sg)"/><rect x="1359.1" y="423.0" width="3.4" height="10.8" fill="#a6f0ec"/></g>
<circle cx="1360.8" cy="474.7" r="5.7" fill="#6cc5c1"/>
<path d="M1365.0 504.6 h-5.6 a2.2 2.2 0 0 0 0 4.5 h3.1 a2.2 2.2 0 0 1 0 4.5 h-6" stroke="#a8f2ef" stroke-width="2.7" fill="none"/>
<path d="M1364.5 396.1 H1360.0 V386.5 H1374.4 V396.1 H1367.2 M1371.0 392.3 L1367.0 396.1 L1371.0 399.9" stroke="#62bcb8" stroke-width="1.6" fill="none"/>
<path d="M1342.1999999999998 354.2 v6 l-3.8 -3z" fill="#7fd4d0"/>
<g><path d="M1433.64 453.41 A20.6 20.6 0 1 1 1459.56 453.41" stroke="#52aeab" stroke-width="2.4" fill="none"/><circle cx="1446.6000000000001" cy="437.4" r="18.6" fill="#3b9693"/><rect x="1445.2" y="415.5" width="2.8" height="2.2" fill="#b2b064"/><circle cx="1446.6000000000001" cy="437.4" r="16.7" fill="#277f7c"/><circle cx="1446.6000000000001" cy="437.4" r="15.3" fill="url(#sg)"/><rect x="1444.9" y="423.0" width="3.4" height="10.8" fill="#a6f0ec"/></g>
<circle cx="1446.6000000000001" cy="474.7" r="5.7" fill="#6cc5c1"/>
<path d="M1450.8000000000002 504.6 h-5.6 a2.2 2.2 0 0 0 0 4.5 h3.1 a2.2 2.2 0 0 1 0 4.5 h-6" stroke="#a8f2ef" stroke-width="2.7" fill="none"/>
<path d="M1537.6 15 L1542.4 7 L1547.2 15Z" fill="#7dd5d0"/>
<path d="M1537.8 262 L1547.2 262 L1542.5 270Z" fill="#7dd5d0"/>
<path d="M1538.4 287.8 h8.4 a3.4 3.4 0 0 1 3.4 3.4 v4.4 a3.4 3.4 0 0 1 -3.4 3.4 h-3.6 l-3.6 4 v-4 h-1.2 a3.4 3.4 0 0 1 -3.4 -3.4 v-4.4 a3.4 3.4 0 0 1 3.4 -3.4z" fill="#7edbd6"/><path d="M1538.2 291.8 h8.8 M1538.2 295 h8.8" stroke="#2f8a88" stroke-width="1.3"/>
<circle cx="1542.2" cy="395.4" r="5.6" fill="#a9b46b"/><rect x="1541.5" y="390.6" width="1.5" height="4" rx=".7" fill="#35908d"/>
<rect x="1535.9" y="416.2" width="12" height="9.4" rx="2" fill="none" stroke="#9ee8e4" stroke-width="1.6"/><rect x="1535.9" y="416.2" width="3.2" height="9.4" fill="#9ee8e4"/>
<path d="M1535.4 449.4 C1541 449.4 1543 447 1547.4 443 M1542.6 442.2 h5.6 v5.6" stroke="#b0b867" stroke-width="1.7" fill="none"/>
<path d="M1548.6 467.6 h-11 m3.6 -3 l-3.6 3 l3.6 3 M1536.4 473.4 h11 m-3.6 -3 l3.6 3 l-3.6 3" stroke="#9ee8e4" stroke-width="1.6" fill="none"/>
<g stroke="#8ae2dc" stroke-width="1.3" fill="none" stroke-linejoin="round"><path d="M451.45 22.6 V8.8 L454.45 18.6 L455.65 11.6 L457.05 16.2"/></g><rect x="458.85" y="8.8" width="1.3" height="13.9" fill="#8ae2dc" opacity=".8"/><rect x="458.65" y="16.4" width="2.2" height="6.3" fill="#8ae2dc"/><rect x="463.05" y="8.8" width="1.3" height="13.9" fill="#8ae2dc" opacity=".8"/><rect x="462.85" y="16.4" width="2.2" height="6.3" fill="#8ae2dc"/>
<path d="M559.15 22 L560.15 9 L561.75 21 L562.9499999999999 12 L564.35 19.2 L565.55 13.6 L566.75 18 L567.9499999999999 14.6 L569.15 17.2 L570.35 15.2 L571.55 16.6 L572.75 15.8" stroke="#8ae2dc" stroke-width="1.45" stroke-linejoin="round" fill="none"/>
<path d="M666.65 22 L667.65 9 L669.25 21 L670.4499999999999 12 L671.85 19.2 L673.05 13.6 L674.25 18 L675.4499999999999 14.6 L676.65 17.2 L677.85 15.2 L679.05 16.6 L680.25 15.8" stroke="#8ae2dc" stroke-width="1.45" stroke-linejoin="round" fill="none"/>
<path d="M774.15 22 L775.15 9 L776.75 21 L777.9499999999999 12 L779.35 19.2 L780.55 13.6 L781.75 18 L782.9499999999999 14.6 L784.15 17.2 L785.35 15.2 L786.55 16.6 L787.75 15.8" stroke="#8ae2dc" stroke-width="1.45" stroke-linejoin="round" fill="none"/>
<path d="M881.65 22 L882.65 9 L884.25 21 L885.4499999999999 12 L886.85 19.2 L888.05 13.6 L889.25 18 L890.4499999999999 14.6 L891.65 17.2 L892.85 15.2 L894.05 16.6 L895.25 15.8" stroke="#8ae2dc" stroke-width="1.45" stroke-linejoin="round" fill="none"/>
<path d="M989.15 22 L990.15 9 L991.75 21 L992.9499999999999 12 L994.35 19.2 L995.55 13.6 L996.75 18 L997.9499999999999 14.6 L999.15 17.2 L1000.35 15.2 L1001.55 16.6 L1002.75 15.8" stroke="#8ae2dc" stroke-width="1.45" stroke-linejoin="round" fill="none"/>
<rect x="1096.25" y="8.6" width="14" height="13.6" fill="#8ae2dc" opacity=".95"/><rect x="1099.65" y="8.6" width="2.2" height="8.2" fill="#409b99"/><rect x="1104.65" y="8.6" width="2.2" height="8.2" fill="#409b99"/><rect x="1100.45" y="16.8" width=".7" height="5.4" fill="#409b99"/><rect x="1105.45" y="16.8" width=".7" height="5.4" fill="#409b99"/>
<path d="M1201 21 h11.3 M1206.6 15.3 v11.4" stroke="#90e4df" stroke-width="2"/>
<path d="M1232.0 11.4 h7.4 v9.6 M1234.9 16.8 l4.5 4.6 l4.5 -4.6" stroke="#8ae2dc" stroke-width="1.9" fill="none"/>
<path d="M1339.6 11.4 h7.4 v9.6 M1342.5 16.8 l4.5 4.6 l4.5 -4.6" stroke="#2c8a87" stroke-width="1.9" fill="none"/>
<path d="M1424.0 19.4 L1423.0 12.6 L1426.8000000000002 15.6 L1430.2 10.4 L1433.6000000000001 15.6 L1437.4 12.6 L1436.4 19.4Z" fill="#8ae2dc"/><rect x="1424.2" y="20.8" width="12" height="1.6" fill="#8ae2dc"/>
<circle cx="394.8" cy="474" r="4.4" fill="#4fa9a6"/><path d="M399 476 l4 4 m0 -4 l-4 4" stroke="#4fa9a6" stroke-width="1.2"/>
<path d="M397.6 504.6 h-4.4 a2 2 0 0 0 0 4 h3 a2 2 0 0 1 0 4 h-4.6 M399.4 507.6 l4 4 m0 -4 l-4 4" stroke="#4fa9a6" stroke-width="1.5" fill="none"/>
<text x="449.05" y="41.00" font-size="14" textLength="42" lengthAdjust="spacingAndGlyphs" fill="#b0f0ee" stroke="#b0f0ee" stroke-width="0.3">Thump</text>
<text x="556.55" y="41.00" font-size="14" textLength="44.4" lengthAdjust="spacingAndGlyphs" fill="#b0f0ee" stroke="#b0f0ee" stroke-width="0.3">Tschick</text>
<text x="664.05" y="41.00" font-size="14" textLength="33.5" lengthAdjust="spacingAndGlyphs" fill="#b0f0ee" stroke="#b0f0ee" stroke-width="0.3">Plonk</text>
<text x="771.55" y="41.00" font-size="14" textLength="37" lengthAdjust="spacingAndGlyphs" fill="#b0f0ee" stroke="#b0f0ee" stroke-width="0.3">Wuub</text>
<text x="879.05" y="41.00" font-size="14" textLength="29.5" lengthAdjust="spacingAndGlyphs" fill="#b0f0ee" stroke="#b0f0ee" stroke-width="0.3">Urbu</text>
<text x="986.55" y="41.00" font-size="14" textLength="31.3" lengthAdjust="spacingAndGlyphs" fill="#b0f0ee" stroke="#b0f0ee" stroke-width="0.3">Plack</text>
<text x="1094.05" y="41.00" font-size="14" textLength="65" lengthAdjust="spacingAndGlyphs" fill="#b0f0ee" stroke="#b0f0ee" stroke-width="0.3">FX Control</text>
<text x="1228.80" y="41.00" font-size="14" textLength="41.3" lengthAdjust="spacingAndGlyphs" fill="#b0f0ee" stroke="#b0f0ee" stroke-width="0.3">Delay+</text>
<text x="1336.40" y="41.00" font-size="14" textLength="42" lengthAdjust="spacingAndGlyphs" fill="#1f7c7a" stroke="#1f7c7a" stroke-width="0.3">Reverb</text>
<text x="1422.20" y="41.00" font-size="14" textLength="41.8" lengthAdjust="spacingAndGlyphs" fill="#b0f0ee" stroke="#b0f0ee" stroke-width="0.3">Master</text>
<text x="381.90" y="80.00" font-size="15" textLength="55.6" lengthAdjust="spacingAndGlyphs" clip-path="url(#cliprows)" fill="#b0f0ee" stroke="#b0f0ee" stroke-width="0.3">Scene 10</text>
<text x="381.90" y="128.00" font-size="15" textLength="55.6" lengthAdjust="spacingAndGlyphs" clip-path="url(#cliprows)" fill="#b0f0ee" stroke="#b0f0ee" stroke-width="0.3">Scene 11</text>
<text x="381.90" y="176.00" font-size="15" textLength="55.6" lengthAdjust="spacingAndGlyphs" clip-path="url(#cliprows)" fill="#b0f0ee" stroke="#b0f0ee" stroke-width="0.3">Scene 12</text>
<text x="470.05" y="67.70" font-size="15.2" textLength="77.5" lengthAdjust="spacingAndGlyphs" clip-path="url(#cliprows)" fill="#1c8280" stroke="#1c8280" stroke-width="0.5">blue kickba...</text>
<text x="470.05" y="115.70" font-size="15.2" textLength="78" lengthAdjust="spacingAndGlyphs" clip-path="url(#cliprows)" fill="#1c8280" stroke="#1c8280" stroke-width="0.5">converter k...</text>
<text x="470.05" y="163.30" font-size="15.2" textLength="78" lengthAdjust="spacingAndGlyphs" clip-path="url(#cliprows)" fill="#1c8280" stroke="#1c8280" stroke-width="0.5">converter k...</text>
<text x="577.55" y="67.70" font-size="15.2" textLength="75.6" lengthAdjust="spacingAndGlyphs" clip-path="url(#cliprows)" fill="#1f8a78" stroke="#1f8a78" stroke-width="0.5">blue hats 1...</text>
<text x="577.55" y="115.70" font-size="15.2" textLength="78.5" lengthAdjust="spacingAndGlyphs" clip-path="url(#cliprows)" fill="#1f8a78" stroke="#1f8a78" stroke-width="0.5">converter p...</text>
<text x="577.55" y="163.30" font-size="15.2" textLength="78.5" lengthAdjust="spacingAndGlyphs" clip-path="url(#cliprows)" fill="#1f8a78" stroke="#1f8a78" stroke-width="0.5">converter p...</text>
<text x="685.05" y="67.70" font-size="15.2" textLength="73.4" lengthAdjust="spacingAndGlyphs" clip-path="url(#cliprows)" fill="#128a7c" stroke="#128a7c" stroke-width="0.5">blue clapst...</text>
<text x="792.55" y="67.70" font-size="15.2" textLength="78" lengthAdjust="spacingAndGlyphs" clip-path="url(#cliprows)" fill="#1f7d86" stroke="#1f7d86" stroke-width="0.5">blue synths...</text>
<text x="792.55" y="115.70" font-size="15.2" textLength="77" lengthAdjust="spacingAndGlyphs" clip-path="url(#cliprows)" fill="#1f7d86" stroke="#1f7d86" stroke-width="0.5">converter s...</text>
<text x="792.55" y="163.30" font-size="15.2" textLength="77" lengthAdjust="spacingAndGlyphs" clip-path="url(#cliprows)" fill="#1f7d86" stroke="#1f7d86" stroke-width="0.5">converter s...</text>
<text x="900.05" y="115.70" font-size="15.2" textLength="77" lengthAdjust="spacingAndGlyphs" clip-path="url(#cliprows)" fill="#1d7d86" stroke="#1d7d86" stroke-width="0.5">converter s...</text>
<text x="900.05" y="163.30" font-size="15.2" textLength="77" lengthAdjust="spacingAndGlyphs" clip-path="url(#cliprows)" fill="#1d7d86" stroke="#1d7d86" stroke-width="0.5">converter s...</text>
<text x="1007.55" y="163.30" font-size="15.2" textLength="72" lengthAdjust="spacingAndGlyphs" clip-path="url(#cliprows)" fill="#107a86" stroke="#107a86" stroke-width="0.5">The Cut gr...</text>
<text x="1115.05" y="163.30" font-size="15.2" textLength="52.7" lengthAdjust="spacingAndGlyphs" clip-path="url(#cliprows)" fill="#188478" stroke="#188478" stroke-width="0.5">Hihat FX</text>
<text x="496.55" y="242.00" font-size="12.2" textLength="37" lengthAdjust="spacingAndGlyphs" filter="url(#ts)" fill="#fff" stroke="#fff" stroke-width="0.55">Hi Gain</text>
<text x="496.55" y="278.00" font-size="12.2" textLength="46" lengthAdjust="spacingAndGlyphs" filter="url(#ts)" fill="#fff" stroke="#fff" stroke-width="0.55">Mid Gain</text>
<text x="496.55" y="314.00" font-size="12.2" textLength="38" lengthAdjust="spacingAndGlyphs" filter="url(#ts)" fill="#fff" stroke="#fff" stroke-width="0.55">Lo Gain</text>
<text x="604.05" y="242.00" font-size="12.2" textLength="23" lengthAdjust="spacingAndGlyphs" filter="url(#ts)" fill="#fff" stroke="#fff" stroke-width="0.55">Freq</text>
<text x="604.05" y="278.00" font-size="12.2" textLength="25" lengthAdjust="spacingAndGlyphs" filter="url(#ts)" fill="#fff" stroke="#fff" stroke-width="0.55">Reso</text>
<text x="604.05" y="314.00" font-size="12.2" textLength="36" lengthAdjust="spacingAndGlyphs" filter="url(#ts)" fill="#fff" stroke="#fff" stroke-width="0.55">Crunch</text>
<text x="711.55" y="242.00" font-size="12.2" textLength="20" lengthAdjust="spacingAndGlyphs" filter="url(#ts)" fill="#fff" stroke="#fff" stroke-width="0.55">Blur</text>
<text x="711.55" y="278.00" font-size="12.2" textLength="37" lengthAdjust="spacingAndGlyphs" filter="url(#ts)" fill="#fff" stroke="#fff" stroke-width="0.55">Flanger</text>
<text x="819.05" y="242.00" font-size="12.2" textLength="30" lengthAdjust="spacingAndGlyphs" filter="url(#ts)" fill="#fff" stroke="#fff" stroke-width="0.55">Comb</text>
<text x="819.05" y="278.00" font-size="12.2" textLength="48" lengthAdjust="spacingAndGlyphs" filter="url(#ts)" fill="#fff" stroke="#fff" stroke-width="0.55">Feedback</text>
<text x="819.05" y="314.00" font-size="12.2" textLength="53" lengthAdjust="spacingAndGlyphs" filter="url(#ts)" fill="#fff" stroke="#fff" stroke-width="0.55">Frequency</text>
<text x="926.55" y="242.00" font-size="12.2" textLength="23" lengthAdjust="spacingAndGlyphs" filter="url(#ts)" fill="#fff" stroke="#fff" stroke-width="0.55">Freq</text>
<text x="926.55" y="278.00" font-size="12.2" textLength="25" lengthAdjust="spacingAndGlyphs" filter="url(#ts)" fill="#fff" stroke="#fff" stroke-width="0.55">Reso</text>
<text x="1034.05" y="242.00" font-size="12.2" textLength="12" lengthAdjust="spacingAndGlyphs" filter="url(#ts)" fill="#fff" stroke="#fff" stroke-width="0.55">LP</text>
<text x="1034.05" y="278.00" font-size="12.2" textLength="14.5" lengthAdjust="spacingAndGlyphs" filter="url(#ts)" fill="#fff" stroke="#fff" stroke-width="0.55">HP</text>
<text x="1034.05" y="314.00" font-size="12.2" textLength="19" lengthAdjust="spacingAndGlyphs" filter="url(#ts)" fill="#fff" stroke="#fff" stroke-width="0.55">Dist</text>
<text x="1276.70" y="242.00" font-size="12.2" textLength="28" lengthAdjust="spacingAndGlyphs" filter="url(#ts)" fill="#fff" stroke="#fff" stroke-width="0.55">Beats</text>
<text x="1276.70" y="278.00" font-size="12.2" textLength="13.5" lengthAdjust="spacingAndGlyphs" filter="url(#ts)" fill="#fff" stroke="#fff" stroke-width="0.55">FB</text>
<text x="1276.70" y="314.00" font-size="12.2" textLength="20" lengthAdjust="spacingAndGlyphs" filter="url(#ts)" fill="#fff" stroke="#fff" stroke-width="0.55">Blur</text>
<text x="1384.30" y="242.00" font-size="12.2" textLength="25.5" lengthAdjust="spacingAndGlyphs" filter="url(#ts)" fill="#fff" stroke="#fff" stroke-width="0.55">Tone</text>
<text x="1384.30" y="278.00" font-size="12.2" textLength="25.5" lengthAdjust="spacingAndGlyphs" filter="url(#ts)" fill="#fff" stroke="#fff" stroke-width="0.55">Tune</text>
<text x="1384.30" y="314.00" font-size="12.2" textLength="52" lengthAdjust="spacingAndGlyphs" clip-path="url(#cr)" filter="url(#ts)" fill="#fff" stroke="#fff" stroke-width="0.55">Pre-delay</text>
<text x="1470.10" y="242.00" font-size="12.2" textLength="49" lengthAdjust="spacingAndGlyphs" filter="url(#ts)" fill="#fff" stroke="#fff" stroke-width="0.55">Compress</text>
<text x="1470.10" y="314.00" font-size="12.2" textLength="34" lengthAdjust="spacingAndGlyphs" filter="url(#ts)" fill="#fff" stroke="#fff" stroke-width="0.55">Tempo</text>
<text x="463.45" y="361.00" font-size="11.4" textLength="33.8" lengthAdjust="spacingAndGlyphs" fill="#b0f0ee" stroke="#b0f0ee" stroke-width="0.15">Delay+</text>
<text x="463.45" y="395.60" font-size="11.4" textLength="34.2" lengthAdjust="spacingAndGlyphs" fill="#b0f0ee" stroke="#b0f0ee" stroke-width="0.15">Reverb</text>
<text x="570.95" y="361.00" font-size="11.4" textLength="33.8" lengthAdjust="spacingAndGlyphs" fill="#b0f0ee" stroke="#b0f0ee" stroke-width="0.15">Delay+</text>
<text x="570.95" y="395.60" font-size="11.4" textLength="34.2" lengthAdjust="spacingAndGlyphs" fill="#b0f0ee" stroke="#b0f0ee" stroke-width="0.15">Reverb</text>
<text x="678.45" y="361.00" font-size="11.4" textLength="33.8" lengthAdjust="spacingAndGlyphs" fill="#b0f0ee" stroke="#b0f0ee" stroke-width="0.15">Delay+</text>
<text x="678.45" y="395.60" font-size="11.4" textLength="34.2" lengthAdjust="spacingAndGlyphs" fill="#b0f0ee" stroke="#b0f0ee" stroke-width="0.15">Reverb</text>
<text x="785.95" y="361.00" font-size="11.4" textLength="33.8" lengthAdjust="spacingAndGlyphs" fill="#b0f0ee" stroke="#b0f0ee" stroke-width="0.15">Delay+</text>
<text x="785.95" y="395.60" font-size="11.4" textLength="34.2" lengthAdjust="spacingAndGlyphs" fill="#b0f0ee" stroke="#b0f0ee" stroke-width="0.15">Reverb</text>
<text x="893.45" y="361.00" font-size="11.4" textLength="33.8" lengthAdjust="spacingAndGlyphs" fill="#b0f0ee" stroke="#b0f0ee" stroke-width="0.15">Delay+</text>
<text x="893.45" y="395.60" font-size="11.4" textLength="34.2" lengthAdjust="spacingAndGlyphs" fill="#b0f0ee" stroke="#b0f0ee" stroke-width="0.15">Reverb</text>
<text x="1000.95" y="361.00" font-size="11.4" textLength="33.8" lengthAdjust="spacingAndGlyphs" fill="#b0f0ee" stroke="#b0f0ee" stroke-width="0.15">Delay+</text>
<text x="1000.95" y="395.60" font-size="11.4" textLength="34.2" lengthAdjust="spacingAndGlyphs" fill="#b0f0ee" stroke="#b0f0ee" stroke-width="0.15">Reverb</text>
<text x="1108.45" y="361.00" font-size="11.4" textLength="33.8" lengthAdjust="spacingAndGlyphs" fill="#6cc3bf" stroke="#6cc3bf" stroke-width="0.15">Delay+</text>
<text x="1108.45" y="395.60" font-size="11.4" textLength="34.2" lengthAdjust="spacingAndGlyphs" fill="#6cc3bf" stroke="#6cc3bf" stroke-width="0.15">Reverb</text>
<text x="1243.20" y="395.60" font-size="11.4" textLength="34" lengthAdjust="spacingAndGlyphs" fill="#6cc3bf" stroke="#6cc3bf" stroke-width="0.15">Reverb</text>
<text x="1355.20" y="361.00" font-size="11.4" textLength="34" lengthAdjust="spacingAndGlyphs" fill="#6cc3bf" stroke="#6cc3bf" stroke-width="0.15">Delay+</text>
<text x="1534.40" y="500.20" font-size="12.2" font-weight="700" textLength="16.2" lengthAdjust="spacingAndGlyphs" fill="#9ee8e4">AB</text>
</svg>
</div>
</body></html>
